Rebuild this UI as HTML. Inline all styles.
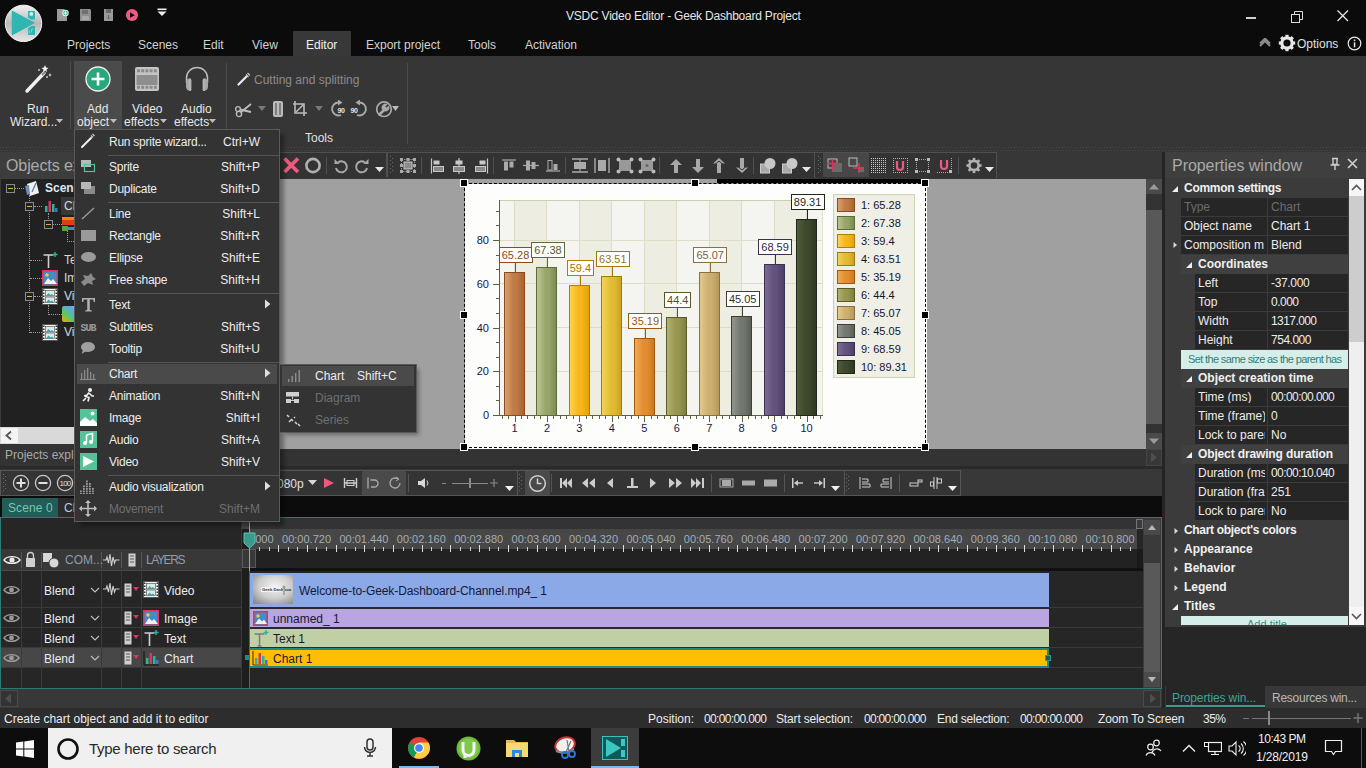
<!DOCTYPE html>
<html><head><meta charset="utf-8"><style>
html,body{margin:0;padding:0;width:1366px;height:768px;overflow:hidden;background:#0b0b0b;}
body{position:relative;font-family:"Liberation Sans",sans-serif;}
div{position:absolute;}
.t{white-space:nowrap;}
</style></head><body>
<div style="left:0px;top:0px;width:1366px;height:56px;background:#0b0b0b;"></div>
<svg style="position:absolute;left:4px;top:4px;" width="40" height="40" viewBox="0 0 40 40"><defs><linearGradient id="lg" x1="0" y1="0" x2="0" y2="1"><stop offset="0" stop-color="#f2f2f2"/><stop offset="0.5" stop-color="#b9b9b9"/><stop offset="1" stop-color="#e6e6e6"/></linearGradient></defs>
<circle cx="19.5" cy="19.35" r="18.2" fill="url(#lg)" stroke="#f6f6f6" stroke-width="1"/>
<path d="M8.5 7.6 L29.6 18.9 L8.5 30.3 Z" fill="#2fb6b2" stroke="#2fb6b2" stroke-width="1.6" stroke-linejoin="round"/>
<path d="M24.1 6.9H31V15.5H27.15L24.1 13.8Z" fill="#2fb6b2"/><path d="M24.1 24L27.7 22H31V31H24.1Z" fill="#2fb6b2"/>
<circle cx="27.3" cy="9.9" r="1.9" fill="#d8f2f2"/><path d="M25.5 29v-2.5M27.5 28.5v-3l2-0.6" stroke="#8ad8d4" stroke-width="0.8" fill="none"/></svg>
<svg style="position:absolute;left:56px;top:8px;" width="14" height="14" viewBox="0 0 14 14"><path d="M1 1h7l3 3v9H1z" fill="#9a9a9a"/><circle cx="9.5" cy="5" r="3.2" fill="#fff"/><circle cx="9.5" cy="5" r="2.4" fill="#3cb89a"/><path d="M9.5 3.3v3.4M7.8 5h3.4" stroke="#fff" stroke-width="0.9"/></svg>
<svg style="position:absolute;left:79px;top:8px;" width="13" height="14" viewBox="0 0 13 14"><path d="M1 1h10l1 1v11H1z" fill="#8f8f8f"/><rect x="3" y="2" width="6" height="4" fill="#6f6f6f"/><rect x="3" y="8" width="7" height="4" fill="#a8a8a8"/></svg>
<svg style="position:absolute;left:103px;top:8px;" width="11" height="14" viewBox="0 0 11 14"><path d="M1 1h9v12H1z" fill="#9a9a9a"/><rect x="3" y="1" width="5" height="4" fill="#6a6a6a"/><path d="M5.5 7v4M4 9.5l1.5 1.5 1.5-1.5" stroke="#666" fill="none"/></svg>
<svg style="position:absolute;left:125px;top:8px;" width="14" height="14" viewBox="0 0 14 14"><circle cx="7" cy="7" r="6.1" fill="#ec5b80"/><path d="M5 4.2L9.8 7.2 5 9.8z" fill="#0b0b0b"/></svg>
<svg style="position:absolute;left:157px;top:8px;" width="10" height="9" viewBox="0 0 10 9"><rect x="0.5" y="0.5" width="9" height="1.6" fill="#eee"/><path d="M0.5 3.5h9L5 8z" fill="#eee"/></svg>
<div class="t" style="left:566px;top:10px;font-size:12px;line-height:12px;color:#e6e6e6;font-weight:400;letter-spacing:-0.22px">VSDC Video Editor - Geek Dashboard Project</div>
<div style="left:1246px;top:17px;width:10px;height:2px;background:#d0d0d0;"></div>
<svg style="position:absolute;left:1290px;top:10px;" width="14" height="14" viewBox="0 0 14 14"><rect x="1.5" y="4.5" width="8" height="8" fill="none" stroke="#ddd"/><path d="M4.5 4.5V1.5h8v8h-3" fill="none" stroke="#ddd"/></svg>
<svg style="position:absolute;left:1336px;top:9px;" width="14" height="14" viewBox="0 0 14 14"><path d="M1.5 1.5L12 12M12 1.5L1.5 12" stroke="#e4e4e4" stroke-width="1.3"/></svg>
<div class="t" style="left:67px;top:39px;font-size:12px;line-height:12px;color:#d2d2d2;font-weight:400;">Projects</div>
<div class="t" style="left:138px;top:39px;font-size:12px;line-height:12px;color:#d2d2d2;font-weight:400;">Scenes</div>
<div class="t" style="left:203px;top:39px;font-size:12px;line-height:12px;color:#d2d2d2;font-weight:400;">Edit</div>
<div class="t" style="left:252px;top:39px;font-size:12px;line-height:12px;color:#d2d2d2;font-weight:400;">View</div>
<div class="t" style="left:366px;top:39px;font-size:12px;line-height:12px;color:#d2d2d2;font-weight:400;">Export project</div>
<div class="t" style="left:468px;top:39px;font-size:12px;line-height:12px;color:#d2d2d2;font-weight:400;">Tools</div>
<div class="t" style="left:525px;top:39px;font-size:12px;line-height:12px;color:#d2d2d2;font-weight:400;">Activation</div>
<div style="left:293px;top:31px;width:58px;height:25px;background:#383838;"></div>
<div class="t" style="left:306px;top:39px;font-size:12px;line-height:12px;color:#f2f2f2;font-weight:400;">Editor</div>
<svg style="position:absolute;left:1259px;top:38px;" width="12" height="10" viewBox="0 0 12 10"><path d="M1 8L6 3l5 5M1 5.5L6 0.5l5 5" stroke="#8a8a8a" stroke-width="2" fill="none"/></svg>
<svg style="position:absolute;left:1278px;top:34px;" width="18" height="18" viewBox="0 0 18 18"><g transform="translate(9 9)"><circle r="5.2" fill="none" stroke="#e8e8e8" stroke-width="3.2"/><rect x="-1.6" y="-8.2" width="3.2" height="4" fill="#e8e8e8" transform="rotate(0)"/><rect x="-1.6" y="-8.2" width="3.2" height="4" fill="#e8e8e8" transform="rotate(45)"/><rect x="-1.6" y="-8.2" width="3.2" height="4" fill="#e8e8e8" transform="rotate(90)"/><rect x="-1.6" y="-8.2" width="3.2" height="4" fill="#e8e8e8" transform="rotate(135)"/><rect x="-1.6" y="-8.2" width="3.2" height="4" fill="#e8e8e8" transform="rotate(180)"/><rect x="-1.6" y="-8.2" width="3.2" height="4" fill="#e8e8e8" transform="rotate(225)"/><rect x="-1.6" y="-8.2" width="3.2" height="4" fill="#e8e8e8" transform="rotate(270)"/><rect x="-1.6" y="-8.2" width="3.2" height="4" fill="#e8e8e8" transform="rotate(315)"/><circle r="2" fill="#0b0b0b"/></g></svg>
<div class="t" style="left:1297px;top:38px;font-size:12px;line-height:12px;color:#e0e0e0;font-weight:400;">Options</div>
<svg style="position:absolute;left:1347px;top:36px;" width="15" height="15" viewBox="0 0 15 15"><circle cx="7.5" cy="7.5" r="6.3" fill="none" stroke="#e8e8e8" stroke-width="1.2"/><rect x="6.8" y="6.3" width="1.5" height="5" fill="#e8e8e8"/><rect x="6.8" y="3.5" width="1.5" height="1.6" fill="#e8e8e8"/></svg>
<div style="left:0px;top:56px;width:1366px;height:96px;background:#363636;"></div>
<svg style="position:absolute;left:24px;top:64px;" width="28" height="30" viewBox="0 0 28 30"><path d="M3 27L20 9" stroke="#f0f0f0" stroke-width="3.4" stroke-linecap="round"/><path d="M18 11l3-3" stroke="#888" stroke-width="2"/><path d="M21 1l1 2.5 2.5 0.5-2 1.5 0.5 2.5-2-1.4-2 1.4 0.5-2.5-2-1.5 2.5-.5z" fill="#f4f4f4"/><path d="M26 9l.6 1.4 1.4.6-1.4.6-.6 1.4-.6-1.4-1.4-.6 1.4-.6z" fill="#ddd"/><circle cx="15" cy="6" r="0.9" fill="#ddd"/><circle cx="23" cy="13" r="0.9" fill="#ddd"/></svg>
<div class="t" style="left:27px;top:103px;font-size:12px;line-height:12px;color:#e8e8e8;font-weight:400;">Run</div>
<div class="t" style="left:10px;top:116px;font-size:12px;line-height:12px;color:#e8e8e8;font-weight:400;">Wizard...</div>
<svg style="position:absolute;left:56px;top:119px;" width="7" height="4" viewBox="0 0 7 4"><path d="M0 0h7L3.5 4z" fill="#bdbdbd"/></svg>
<div style="left:70px;top:61px;width:1px;height:68px;background:#4c4c4c;"></div>
<div style="left:74px;top:61px;width:48px;height:68px;background:#4b4b4b;"></div>
<svg style="position:absolute;left:85px;top:66px;" width="26" height="26" viewBox="0 0 26 26"><circle cx="13" cy="13" r="12" fill="#27a77a" stroke="#f2f2f2" stroke-width="1.3"/><path d="M13 6.5v13M6.5 13h13" stroke="#fff" stroke-width="2.6"/></svg>
<div class="t" style="left:87px;top:103px;font-size:12px;line-height:12px;color:#e8e8e8;font-weight:400;">Add</div>
<div class="t" style="left:77px;top:116px;font-size:12px;line-height:12px;color:#e8e8e8;font-weight:400;">object</div>
<svg style="position:absolute;left:110px;top:119px;" width="7" height="4" viewBox="0 0 7 4"><path d="M0 0h7L3.5 4z" fill="#bdbdbd"/></svg>
<svg style="position:absolute;left:134px;top:66px;" width="26" height="26" viewBox="0 0 26 26"><rect x="1" y="1" width="24" height="24" rx="2" fill="#c4c4c4"/><rect x="2.5" y="9" width="21" height="10" fill="#8e8e8e"/><rect x="3.0" y="3.3" width="3" height="3" fill="#8a8a8a"/><rect x="3.0" y="19.8" width="3" height="3" fill="#8a8a8a"/><rect x="7.2" y="3.3" width="3" height="3" fill="#8a8a8a"/><rect x="7.2" y="19.8" width="3" height="3" fill="#8a8a8a"/><rect x="11.4" y="3.3" width="3" height="3" fill="#8a8a8a"/><rect x="11.4" y="19.8" width="3" height="3" fill="#8a8a8a"/><rect x="15.600000000000001" y="3.3" width="3" height="3" fill="#8a8a8a"/><rect x="15.600000000000001" y="19.8" width="3" height="3" fill="#8a8a8a"/><rect x="19.8" y="3.3" width="3" height="3" fill="#8a8a8a"/><rect x="19.8" y="19.8" width="3" height="3" fill="#8a8a8a"/></svg>
<div class="t" style="left:132px;top:103px;font-size:12px;line-height:12px;color:#e8e8e8;font-weight:400;">Video</div>
<div class="t" style="left:124px;top:116px;font-size:12px;line-height:12px;color:#e8e8e8;font-weight:400;">effects</div>
<svg style="position:absolute;left:160px;top:119px;" width="7" height="4" viewBox="0 0 7 4"><path d="M0 0h7L3.5 4z" fill="#bdbdbd"/></svg>
<svg style="position:absolute;left:183px;top:65px;" width="28" height="28" viewBox="0 0 28 28"><path d="M3.5 18V13a10.5 10.5 0 0 1 21 0v5" fill="none" stroke="#bdbdbd" stroke-width="1.5"/><path d="M3 17.5q0-4 4.5-4.5v13q-4.5-0.5-4.5-4.5z" fill="#a8a8a8"/><path d="M25 17.5q0-4-4.5-4.5v13q4.5-0.5 4.5-4.5z" fill="#a8a8a8"/><rect x="6" y="14" width="2.4" height="12" rx="1" fill="#b4b4b4"/><rect x="19.6" y="14" width="2.4" height="12" rx="1" fill="#b4b4b4"/></svg>
<div class="t" style="left:181px;top:103px;font-size:12px;line-height:12px;color:#e8e8e8;font-weight:400;">Audio</div>
<div class="t" style="left:174px;top:116px;font-size:12px;line-height:12px;color:#e8e8e8;font-weight:400;">effects</div>
<svg style="position:absolute;left:209px;top:119px;" width="7" height="4" viewBox="0 0 7 4"><path d="M0 0h7L3.5 4z" fill="#bdbdbd"/></svg>
<div style="left:226px;top:63px;width:1px;height:66px;background:#4c4c4c;"></div>
<svg style="position:absolute;left:237px;top:72px;" width="14" height="14" viewBox="0 0 14 14"><path d="M1.5 12.5L9.5 4.5" stroke="#eee" stroke-width="2.2" stroke-linecap="round"/><path d="M9 2.5l2.5 2.5M10.5 1l2.5 2.5" stroke="#ccc" stroke-width="1.2"/></svg>
<div class="t" style="left:254px;top:74px;font-size:12px;line-height:12px;color:#8c8c8c;font-weight:400;">Cutting and splitting</div>
<svg style="position:absolute;left:235px;top:100px;" width="18" height="18" viewBox="0 0 18 18"><circle cx="4" cy="14" r="2.6" fill="none" stroke="#bbb" stroke-width="1.4"/><circle cx="3" cy="9" r="2.4" fill="none" stroke="#bbb" stroke-width="1.4"/><path d="M5.5 12.5L16 4M5 9.5L16 12" stroke="#bbb" stroke-width="1.8"/></svg>
<svg style="position:absolute;left:258px;top:106px;" width="8" height="5" viewBox="0 0 8 5"><path d="M0 0h8L4 5z" fill="#777"/></svg>
<svg style="position:absolute;left:272px;top:100px;" width="12" height="18" viewBox="0 0 12 18"><rect x="1" y="1" width="10" height="16" rx="2" fill="#bbb"/><path d="M4 3v12M8 3v12" stroke="#555" stroke-width="1.2"/></svg>
<svg style="position:absolute;left:292px;top:100px;" width="16" height="18" viewBox="0 0 16 18"><path d="M3 1v12h12M1 4h11v12" fill="none" stroke="#bbb" stroke-width="1.6"/><path d="M4 12L12 4" stroke="#bbb" stroke-width="1.4"/></svg>
<svg style="position:absolute;left:315px;top:106px;" width="8" height="5" viewBox="0 0 8 5"><path d="M0 0h8L4 5z" fill="#777"/></svg>
<svg style="position:absolute;left:329px;top:100px;" width="20" height="18" viewBox="0 0 20 18"><path d="M10 2.5A6.5 6.5 0 1 0 12 15" fill="none" stroke="#aaa" stroke-width="1.8"/><path d="M9 -0.5l4.5 3-4.5 3z" fill="#aaa"/><text x="8.5" y="12.5" font-size="7" font-family="Liberation Sans" font-weight="bold" fill="#e6e6e6" letter-spacing="-0.3">90</text></svg>
<svg style="position:absolute;left:349px;top:100px;" width="20" height="18" viewBox="0 0 20 18"><path d="M10 2.5A6.5 6.5 0 1 1 8 15" fill="none" stroke="#aaa" stroke-width="1.8"/><path d="M11 -0.5l-4.5 3 4.5 3z" fill="#aaa"/><text x="1.5" y="12.5" font-size="7" font-family="Liberation Sans" font-weight="bold" fill="#e6e6e6" letter-spacing="-0.3">90</text></svg>
<svg style="position:absolute;left:375px;top:100px;" width="18" height="18" viewBox="0 0 18 18"><circle cx="9" cy="9.2" r="7.3" fill="none" stroke="#aaa" stroke-width="1.7"/><path d="M4.5 14.5L9.5 9.5" stroke="#aaa" stroke-width="2.6" stroke-linecap="round"/><path d="M8.2 10.2a3.6 3.6 0 0 1 4.3-5.8l-2.2 2.2 1.2 1.2 2.2-2.2a3.6 3.6 0 0 1-5.5 4.6z" fill="#aaa"/></svg>
<svg style="position:absolute;left:392px;top:106px;" width="7" height="5" viewBox="0 0 7 5"><path d="M0 0h7L3.5 5z" fill="#bbb"/></svg>
<div class="t" style="left:305px;top:132px;font-size:12px;line-height:12px;color:#e0e0e0;font-weight:400;">Tools</div>
<div style="left:407px;top:63px;width:1px;height:81px;background:#4c4c4c;"></div>
<div style="left:0px;top:147px;width:1366px;height:1px;background:transparent;background:repeating-linear-gradient(90deg,#4a4a4a 0 1px,transparent 1px 3px)"></div>
<div style="left:1px;top:150px;width:1366px;height:1px;background:transparent;background:repeating-linear-gradient(90deg,#4a4a4a 0 1px,transparent 1px 3px)"></div>
<div style="left:0px;top:152px;width:1162px;height:27px;background:#373737;"></div>
<div style="left:0px;top:152px;width:279px;height:27px;background:#3d3d3d;"></div>
<div class="t" style="left:6px;top:158px;font-size:16px;line-height:16px;color:#a9a9a9;font-weight:400;letter-spacing:-0.1px">Objects explorer</div>
<div style="left:0px;top:179px;width:279px;height:248px;background:#212121;"></div>
<div style="left:0px;top:179px;width:1px;height:248px;background:#3a3a3a;"></div>
<div style="left:15px;top:188px;width:9px;height:1px;background:transparent;border-top:1px dotted #9a9a9a;box-sizing:border-box;"></div>
<div style="left:6px;top:184px;width:9px;height:9px;background:#212121;box-sizing:border-box;border:1px solid #8a8a8a;"></div>
<div style="left:8px;top:188px;width:5px;height:1px;background:#d8b24c;"></div>
<div style="left:29px;top:195px;width:1px;height:138px;background:transparent;border-left:1px dotted #9a9a9a;box-sizing:border-box;"></div>
<svg style="position:absolute;left:24px;top:180px;" width="16" height="16" viewBox="0 0 16 16"><path d="M3 4l9-3 3 12-9 3z" fill="#f0f0f0"/><path d="M1 6l4-1 1 9-3 1z" fill="#6d8fb8"/><path d="M8 12l4-9" stroke="#4a79b0" stroke-width="1.2"/></svg>
<div class="t" style="left:45px;top:182px;font-size:12px;line-height:12px;color:#dce6f0;font-weight:700;">Scene 0</div>
<div style="left:34px;top:206px;width:8px;height:1px;background:transparent;border-top:1px dotted #9a9a9a;box-sizing:border-box;"></div>
<div style="left:25px;top:202px;width:9px;height:9px;background:#212121;box-sizing:border-box;border:1px solid #8a8a8a;"></div>
<div style="left:27px;top:206px;width:5px;height:1px;background:#d8b24c;"></div>
<div style="left:61px;top:197px;width:100px;height:18px;background:#383838;"></div>
<svg style="position:absolute;left:42px;top:198px;" width="16" height="16" viewBox="0 0 16 16"><path d="M1 1v14h15" stroke="#222" fill="none"/><rect x="3" y="8" width="2.5" height="6" fill="#2bb59a"/><rect x="6.5" y="3" width="2.5" height="11" fill="#e0325a"/><rect x="10" y="6" width="2.5" height="8" fill="#2bb59a"/><rect x="13" y="10" width="2.5" height="4" fill="#3a7ac8"/></svg>
<div class="t" style="left:64px;top:200px;font-size:12px;line-height:12px;color:#d8d8d8;font-weight:400;">Chart 1</div>
<div style="left:48px;top:213px;width:1px;height:8px;background:transparent;border-left:1px dotted #9a9a9a;box-sizing:border-box;"></div>
<div style="left:53px;top:224px;width:9px;height:1px;background:transparent;border-top:1px dotted #9a9a9a;box-sizing:border-box;"></div>
<div style="left:44px;top:220px;width:9px;height:9px;background:#212121;box-sizing:border-box;border:1px solid #8a8a8a;"></div>
<div style="left:46px;top:224px;width:5px;height:1px;background:#d8b24c;"></div>
<svg style="position:absolute;left:62px;top:216px;" width="16" height="16" viewBox="0 0 16 16"><rect x="0" y="1" width="16" height="8" fill="#e03c1c"/><rect x="0" y="1" width="16" height="3" fill="#f08020"/><rect x="0" y="10" width="6" height="5" fill="#5aa040"/><rect x="6" y="11" width="10" height="3" fill="#3a8ad0"/></svg>
<div style="left:67px;top:231px;width:1px;height:11px;background:transparent;border-left:1px dotted #9a9a9a;box-sizing:border-box;"></div>
<div style="left:67px;top:241px;width:13px;height:1px;background:transparent;border-top:1px dotted #9a9a9a;box-sizing:border-box;"></div>
<div style="left:30px;top:260px;width:12px;height:1px;background:transparent;border-top:1px dotted #9a9a9a;box-sizing:border-box;"></div>
<svg style="position:absolute;left:42px;top:251px;" width="16" height="18" viewBox="0 0 16 18"><path d="M1.5 4h10M6.5 4v13" stroke="#cfcfcf" stroke-width="1.6"/><path d="M13 1v5M10.5 3.5h5" stroke="#2bb59a" stroke-width="1.4"/></svg>
<div class="t" style="left:64px;top:254px;font-size:12px;line-height:12px;color:#d8d8d8;font-weight:400;">Text</div>
<div style="left:30px;top:278px;width:12px;height:1px;background:transparent;border-top:1px dotted #9a9a9a;box-sizing:border-box;"></div>
<svg style="position:absolute;left:42px;top:270px;" width="16" height="16" viewBox="0 0 16 16"><rect x="0.75" y="0.75" width="14.5" height="14.5" fill="#3f8ec9" stroke="#e0325a" stroke-width="1.5"/><path d="M2 14l4-6 3 3 2-2 4 5z" fill="#f0f0f0"/><circle cx="5" cy="5" r="1.8" fill="#f6c542"/></svg>
<div class="t" style="left:64px;top:272px;font-size:12px;line-height:12px;color:#d8d8d8;font-weight:400;">Image</div>
<div style="left:34px;top:296px;width:8px;height:1px;background:transparent;border-top:1px dotted #9a9a9a;box-sizing:border-box;"></div>
<div style="left:25px;top:292px;width:9px;height:9px;background:#212121;box-sizing:border-box;border:1px solid #8a8a8a;"></div>
<div style="left:27px;top:296px;width:5px;height:1px;background:#d8b24c;"></div>
<svg style="position:absolute;left:42px;top:288px;" width="16" height="17" viewBox="0 0 16 17"><rect x="0.5" y="0.5" width="15" height="16" fill="#f4f4f4" stroke="#555"/><rect x="3.5" y="2.5" width="9" height="5.5" fill="#dfe8e8" stroke="#444" stroke-width="0.6"/><rect x="3.5" y="9" width="9" height="5.5" fill="#dfe8e8" stroke="#444" stroke-width="0.6"/><path d="M4 8l2.5-3 2 2 1.5-1 2 2M4 14.5l2.5-3 2 2 1.5-1 2 2" fill="#3aa8a0"/><rect x="1" y="1.5" width="1.5" height="1.5" fill="#333"/><rect x="13.5" y="1.5" width="1.5" height="1.5" fill="#333"/><rect x="1" y="4.5" width="1.5" height="1.5" fill="#333"/><rect x="13.5" y="4.5" width="1.5" height="1.5" fill="#333"/><rect x="1" y="7.5" width="1.5" height="1.5" fill="#333"/><rect x="13.5" y="7.5" width="1.5" height="1.5" fill="#333"/><rect x="1" y="10.5" width="1.5" height="1.5" fill="#333"/><rect x="13.5" y="10.5" width="1.5" height="1.5" fill="#333"/><rect x="1" y="13.5" width="1.5" height="1.5" fill="#333"/><rect x="13.5" y="13.5" width="1.5" height="1.5" fill="#333"/></svg>
<div class="t" style="left:64px;top:290px;font-size:12px;line-height:12px;color:#d8d8d8;font-weight:400;">Video</div>
<div style="left:48px;top:305px;width:1px;height:10px;background:transparent;border-left:1px dotted #9a9a9a;box-sizing:border-box;"></div>
<div style="left:48px;top:314px;width:14px;height:1px;background:transparent;border-top:1px dotted #9a9a9a;box-sizing:border-box;"></div>
<svg style="position:absolute;left:62px;top:306px;" width="16" height="16" viewBox="0 0 16 16"><defs><linearGradient id="rb" x1="0" y1="1" x2="1" y2="0"><stop offset="0" stop-color="#f5a400"/><stop offset="0.35" stop-color="#5ec85a"/><stop offset="0.7" stop-color="#58a8f0"/><stop offset="1" stop-color="#c0a0f0"/></linearGradient></defs><rect x="0" y="0" width="16" height="16" rx="2" fill="url(#rb)"/></svg>
<div style="left:30px;top:332px;width:12px;height:1px;background:transparent;border-top:1px dotted #9a9a9a;box-sizing:border-box;"></div>
<svg style="position:absolute;left:42px;top:324px;" width="16" height="17" viewBox="0 0 16 17"><rect x="0.5" y="0.5" width="15" height="16" fill="#f4f4f4" stroke="#555"/><rect x="3.5" y="2.5" width="9" height="5.5" fill="#dfe8e8" stroke="#444" stroke-width="0.6"/><rect x="3.5" y="9" width="9" height="5.5" fill="#dfe8e8" stroke="#444" stroke-width="0.6"/><path d="M4 8l2.5-3 2 2 1.5-1 2 2M4 14.5l2.5-3 2 2 1.5-1 2 2" fill="#3aa8a0"/><rect x="1" y="1.5" width="1.5" height="1.5" fill="#333"/><rect x="13.5" y="1.5" width="1.5" height="1.5" fill="#333"/><rect x="1" y="4.5" width="1.5" height="1.5" fill="#333"/><rect x="13.5" y="4.5" width="1.5" height="1.5" fill="#333"/><rect x="1" y="7.5" width="1.5" height="1.5" fill="#333"/><rect x="13.5" y="7.5" width="1.5" height="1.5" fill="#333"/><rect x="1" y="10.5" width="1.5" height="1.5" fill="#333"/><rect x="13.5" y="10.5" width="1.5" height="1.5" fill="#333"/><rect x="1" y="13.5" width="1.5" height="1.5" fill="#333"/><rect x="13.5" y="13.5" width="1.5" height="1.5" fill="#333"/></svg>
<div class="t" style="left:64px;top:326px;font-size:12px;line-height:12px;color:#d8d8d8;font-weight:400;">Video</div>
<div style="left:0px;top:427px;width:279px;height:17px;background:#d9d9d9;"></div>
<div style="left:1px;top:428px;width:17px;height:15px;background:#f4f4f4;"></div>
<svg style="position:absolute;left:4px;top:430px;" width="10" height="11" viewBox="0 0 10 11"><path d="M7 1.5L2.5 5.5 7 9.5" stroke="#555" stroke-width="1.8" fill="none"/></svg>
<div style="left:0px;top:444px;width:279px;height:22px;background:#333333;"></div>
<div class="t" style="left:5px;top:449px;font-size:12px;line-height:12px;color:#a9a9a9;font-weight:400;">Projects explorer</div>
<div style="left:279px;top:179px;width:883px;height:270px;background:#a0a0a0;"></div>
<div style="left:1146px;top:179px;width:16px;height:270px;background:#333333;"></div>
<div style="left:1146px;top:179px;width:16px;height:15px;background:#4a4a4a;"></div>
<svg style="position:absolute;left:1148px;top:183px;" width="12" height="7" viewBox="0 0 12 7"><path d="M1 6.5L6 1l5 5.5z" fill="#9a9a9a"/></svg>
<div style="left:1146px;top:210px;width:16px;height:214px;background:#585858;"></div>
<div style="left:1146px;top:433px;width:16px;height:16px;background:#4a4a4a;"></div>
<svg style="position:absolute;left:1148px;top:438px;" width="12" height="7" viewBox="0 0 12 7"><path d="M1 0.5h10L6 6z" fill="#9a9a9a"/></svg>
<div style="left:279px;top:449px;width:883px;height:17px;background:#333333;"></div>
<div style="left:1146px;top:449px;width:16px;height:17px;background:#383838;box-sizing:border-box;border:1px solid #444;"></div>
<svg style="position:absolute;left:1150px;top:452px;" width="8" height="11" viewBox="0 0 8 11"><path d="M1 0.5L7 5.5 1 10.5z" fill="#4e4e4e"/></svg>
<div style="left:0px;top:466px;width:1162px;height:3px;background:#2a2a2a;"></div>
<div style="left:1162px;top:152px;width:3px;height:558px;background:#242424;"></div>
<div style="left:276px;top:152px;width:721px;height:26px;background:#333333;box-sizing:border-box;border:1px solid #505050;border-left:none;border-bottom:none;"></div>
<div style="left:823px;top:153px;width:46px;height:24px;background:#474747;"></div>
<svg style="position:absolute;left:282px;top:156px;" width="18" height="18" viewBox="0 0 18 18"><path d="M2.5 2.5L16 16M16 2.5L2.5 16" stroke="#ec5b7d" stroke-width="3.8"/></svg>
<svg style="position:absolute;left:304px;top:157px;" width="18" height="17" viewBox="0 0 18 17"><circle cx="9" cy="8.5" r="6.6" fill="none" stroke="#b0b0b0" stroke-width="2.6"/></svg>
<div style="left:326px;top:157px;width:1px;height:17px;background:#505050;"></div>
<svg style="position:absolute;left:332px;top:157px;" width="17" height="17" viewBox="0 0 17 17"><path d="M6 5.5A5.5 5.5 0 1 1 4 11" fill="none" stroke="#a8a8a8" stroke-width="2"/><path d="M2.5 2v5h5z" fill="#a8a8a8"/></svg>
<svg style="position:absolute;left:354px;top:157px;" width="17" height="17" viewBox="0 0 17 17"><path d="M11 5.5A5.5 5.5 0 1 0 13 11" fill="none" stroke="#a8a8a8" stroke-width="2"/><path d="M14.5 2v5h-5z" fill="#a8a8a8"/></svg>
<svg style="position:absolute;left:375px;top:167px;" width="9" height="6" viewBox="0 0 9 6"><path d="M0 0h9L4.5 5z" fill="#e8e8e8"/></svg>
<div style="left:386px;top:153px;width:2px;height:24px;background:#505050;"></div>
<svg style="position:absolute;left:390px;top:156px;" width="4" height="19" viewBox="0 0 4 19"><rect x="0" y="0" width="1" height="1" fill="#6a6a6a"/><rect x="2" y="2" width="1" height="1" fill="#6a6a6a"/><rect x="0" y="4" width="1" height="1" fill="#6a6a6a"/><rect x="2" y="6" width="1" height="1" fill="#6a6a6a"/><rect x="0" y="8" width="1" height="1" fill="#6a6a6a"/><rect x="2" y="10" width="1" height="1" fill="#6a6a6a"/><rect x="0" y="12" width="1" height="1" fill="#6a6a6a"/><rect x="2" y="14" width="1" height="1" fill="#6a6a6a"/><rect x="0" y="16" width="1" height="1" fill="#6a6a6a"/></svg>
<svg style="position:absolute;left:399px;top:157px;" width="18" height="17" viewBox="0 0 18 17"><rect x="2.5" y="2.5" width="13" height="12" fill="none" stroke="#999" stroke-dasharray="1.5 1"/><rect x="5" y="5" width="8" height="7" fill="#8a8a8a" stroke="#c8c8c8"/><rect x="1" y="1" width="3" height="3" fill="#aaa"/><rect x="1" y="13" width="3" height="3" fill="#aaa"/><rect x="7.5" y="1" width="3" height="3" fill="#aaa"/><rect x="7.5" y="13" width="3" height="3" fill="#aaa"/><rect x="14" y="1" width="3" height="3" fill="#aaa"/><rect x="14" y="13" width="3" height="3" fill="#aaa"/><rect x="1" y="7" width="3" height="3" fill="#aaa"/><rect x="14" y="7" width="3" height="3" fill="#aaa"/></svg>
<div style="left:421px;top:157px;width:1px;height:17px;background:#505050;"></div>
<svg style="position:absolute;left:429px;top:157px;" width="18" height="17" viewBox="0 0 18 17"><path d="M2.5 1.5v15" stroke="#c8c8c8" stroke-width="1.2"/><rect x="4.5" y="3.5" width="6" height="4" fill="#c8c8c8"/><rect x="4.5" y="9.5" width="10" height="5" fill="#888" stroke="#c8c8c8"/></svg>
<svg style="position:absolute;left:450px;top:157px;" width="18" height="17" viewBox="0 0 18 17"><path d="M9 1v16" stroke="#c8c8c8" stroke-width="1.2"/><rect x="5.5" y="3.5" width="7" height="4" fill="#c8c8c8"/><rect x="3.5" y="9.5" width="11" height="5" fill="#888" stroke="#c8c8c8"/></svg>
<svg style="position:absolute;left:472px;top:157px;" width="18" height="17" viewBox="0 0 18 17"><path d="M15.5 1.5v15" stroke="#c8c8c8" stroke-width="1.2"/><rect x="7.5" y="3.5" width="6" height="4" fill="#c8c8c8"/><rect x="3.5" y="9.5" width="10" height="5" fill="#888" stroke="#c8c8c8"/></svg>
<div style="left:493px;top:157px;width:1px;height:17px;background:#505050;"></div>
<svg style="position:absolute;left:500px;top:157px;" width="18" height="17" viewBox="0 0 18 17"><path d="M2 3h14" stroke="#aaa" stroke-width="1.2"/><rect x="4" y="4.5" width="4" height="9" fill="#aaa"/><rect x="9.5" y="4.5" width="4" height="6" fill="#aaa"/></svg>
<svg style="position:absolute;left:522px;top:157px;" width="18" height="17" viewBox="0 0 18 17"><path d="M1 8.5h16" stroke="#aaa" stroke-width="1.2"/><rect x="4" y="3.5" width="4" height="10" fill="#aaa"/><rect x="9.5" y="5" width="4" height="7" fill="#aaa"/></svg>
<svg style="position:absolute;left:544px;top:157px;" width="18" height="17" viewBox="0 0 18 17"><path d="M2 14h14" stroke="#aaa" stroke-width="1.2"/><rect x="4" y="3.5" width="4" height="9.5" fill="none" stroke="#aaa"/><rect x="9.5" y="7" width="4" height="6" fill="#aaa"/></svg>
<div style="left:565px;top:157px;width:1px;height:17px;background:#505050;"></div>
<svg style="position:absolute;left:571px;top:157px;" width="18" height="17" viewBox="0 0 18 17"><path d="M1 2h16M1 15h16" stroke="#aaa" stroke-width="1.4"/><rect x="3" y="5" width="12" height="7" fill="#aaa"/><path d="M9 2v3M9 12v3" stroke="#aaa"/></svg>
<svg style="position:absolute;left:593px;top:157px;" width="18" height="17" viewBox="0 0 18 17"><path d="M2 1v15M16 1v15" stroke="#aaa" stroke-width="1.4"/><rect x="5" y="3" width="8" height="11" fill="#aaa"/></svg>
<svg style="position:absolute;left:616px;top:157px;" width="18" height="17" viewBox="0 0 18 17"><rect x="3" y="3" width="12" height="11" fill="#999"/><circle cx="2.5" cy="2.5" r="2" fill="#bbb"/><circle cx="2.5" cy="14.5" r="2" fill="#bbb"/><circle cx="15.5" cy="2.5" r="2" fill="#bbb"/><circle cx="15.5" cy="14.5" r="2" fill="#bbb"/></svg>
<svg style="position:absolute;left:638px;top:157px;" width="18" height="17" viewBox="0 0 18 17"><rect x="3" y="3" width="12" height="11" fill="#999"/><circle cx="9" cy="8.5" r="1.5" fill="#666"/><circle cx="2.5" cy="2.5" r="2" fill="#bbb"/><circle cx="2.5" cy="14.5" r="2" fill="#bbb"/><circle cx="15.5" cy="2.5" r="2" fill="#bbb"/><circle cx="15.5" cy="14.5" r="2" fill="#bbb"/></svg>
<div style="left:659px;top:157px;width:1px;height:17px;background:#505050;"></div>
<svg style="position:absolute;left:667px;top:157px;" width="18" height="17" viewBox="0 0 18 17"><path d="M9 2l6 6h-4v8H7V8H3z" fill="#a8a8a8"/></svg>
<svg style="position:absolute;left:689px;top:157px;" width="18" height="17" viewBox="0 0 18 17"><path d="M9 16l6-6h-4V2H7v8H3z" fill="#a8a8a8"/></svg>
<svg style="position:absolute;left:710px;top:157px;" width="18" height="17" viewBox="0 0 18 17"><path d="M9 1l6 5.5h-4v9.5H7V6.5H3z" fill="#a8a8a8"/><path d="M3 9l6-5 6 5" stroke="#333" stroke-width="1" fill="none"/></svg>
<svg style="position:absolute;left:733px;top:157px;" width="18" height="17" viewBox="0 0 18 17"><path d="M9 16l6-5.5h-4V1H7v9.5H3z" fill="#a8a8a8"/><path d="M3 8l6 5 6-5" stroke="#333" stroke-width="1" fill="none"/></svg>
<div style="left:753px;top:157px;width:1px;height:17px;background:#505050;"></div>
<svg style="position:absolute;left:759px;top:157px;" width="18" height="17" viewBox="0 0 18 17"><rect x="1.5" y="7" width="9" height="9" fill="#aaa" stroke="#ccc"/><circle cx="11" cy="6.5" r="5.5" fill="#c8c8c8"/></svg>
<svg style="position:absolute;left:781px;top:157px;" width="18" height="17" viewBox="0 0 18 17"><rect x="1.5" y="7" width="9" height="9" fill="#aaa" stroke="#ccc"/><circle cx="11" cy="6.5" r="5.5" fill="#c8c8c8"/></svg>
<svg style="position:absolute;left:802px;top:167px;" width="9" height="6" viewBox="0 0 9 6"><path d="M0 0h9L4.5 5z" fill="#e8e8e8"/></svg>
<div style="left:814px;top:152px;width:1px;height:26px;background:#505050;"></div>
<svg style="position:absolute;left:818px;top:156px;" width="4" height="19" viewBox="0 0 4 19"><rect x="0" y="0" width="1" height="1" fill="#6a6a6a"/><rect x="2" y="2" width="1" height="1" fill="#6a6a6a"/><rect x="0" y="4" width="1" height="1" fill="#6a6a6a"/><rect x="2" y="6" width="1" height="1" fill="#6a6a6a"/><rect x="0" y="8" width="1" height="1" fill="#6a6a6a"/><rect x="2" y="10" width="1" height="1" fill="#6a6a6a"/><rect x="0" y="12" width="1" height="1" fill="#6a6a6a"/><rect x="2" y="14" width="1" height="1" fill="#6a6a6a"/><rect x="0" y="16" width="1" height="1" fill="#6a6a6a"/></svg>
<svg style="position:absolute;left:826px;top:157px;" width="18" height="17" viewBox="0 0 18 17"><rect x="2" y="2" width="9" height="9" fill="none" stroke="#bbb"/><rect x="6" y="6" width="10" height="9" fill="#6a6a6a"/><path d="M1 6.5h11M6.5 2v12" stroke="#e0325a" stroke-width="1.4"/></svg>
<svg style="position:absolute;left:848px;top:157px;" width="18" height="17" viewBox="0 0 18 17"><rect x="1" y="1" width="8" height="8" fill="none" stroke="#bbb"/><rect x="10" y="10" width="6" height="5" fill="#6a6a6a"/><path d="M5 11h11M11 6v10" stroke="#e0325a" stroke-width="1.4"/></svg>
<svg style="position:absolute;left:870px;top:157px;" width="18" height="17" viewBox="0 0 18 17"><rect x="1" y="1" width="1" height="1" fill="#c8c8c8"/><rect x="1" y="3" width="1" height="1" fill="#c8c8c8"/><rect x="1" y="5" width="1" height="1" fill="#c8c8c8"/><rect x="1" y="7" width="1" height="1" fill="#c8c8c8"/><rect x="1" y="9" width="1" height="1" fill="#c8c8c8"/><rect x="1" y="11" width="1" height="1" fill="#c8c8c8"/><rect x="1" y="13" width="1" height="1" fill="#c8c8c8"/><rect x="1" y="15" width="1" height="1" fill="#c8c8c8"/><rect x="3" y="1" width="1" height="1" fill="#c8c8c8"/><rect x="3" y="3" width="1" height="1" fill="#c8c8c8"/><rect x="3" y="5" width="1" height="1" fill="#c8c8c8"/><rect x="3" y="7" width="1" height="1" fill="#c8c8c8"/><rect x="3" y="9" width="1" height="1" fill="#c8c8c8"/><rect x="3" y="11" width="1" height="1" fill="#c8c8c8"/><rect x="3" y="13" width="1" height="1" fill="#c8c8c8"/><rect x="3" y="15" width="1" height="1" fill="#c8c8c8"/><rect x="5" y="1" width="1" height="1" fill="#c8c8c8"/><rect x="5" y="3" width="1" height="1" fill="#c8c8c8"/><rect x="5" y="5" width="1" height="1" fill="#c8c8c8"/><rect x="5" y="7" width="1" height="1" fill="#c8c8c8"/><rect x="5" y="9" width="1" height="1" fill="#c8c8c8"/><rect x="5" y="11" width="1" height="1" fill="#c8c8c8"/><rect x="5" y="13" width="1" height="1" fill="#c8c8c8"/><rect x="5" y="15" width="1" height="1" fill="#c8c8c8"/><rect x="7" y="1" width="1" height="1" fill="#c8c8c8"/><rect x="7" y="3" width="1" height="1" fill="#c8c8c8"/><rect x="7" y="5" width="1" height="1" fill="#c8c8c8"/><rect x="7" y="7" width="1" height="1" fill="#c8c8c8"/><rect x="7" y="9" width="1" height="1" fill="#c8c8c8"/><rect x="7" y="11" width="1" height="1" fill="#c8c8c8"/><rect x="7" y="13" width="1" height="1" fill="#c8c8c8"/><rect x="7" y="15" width="1" height="1" fill="#c8c8c8"/><rect x="9" y="1" width="1" height="1" fill="#c8c8c8"/><rect x="9" y="3" width="1" height="1" fill="#c8c8c8"/><rect x="9" y="5" width="1" height="1" fill="#c8c8c8"/><rect x="9" y="7" width="1" height="1" fill="#c8c8c8"/><rect x="9" y="9" width="1" height="1" fill="#c8c8c8"/><rect x="9" y="11" width="1" height="1" fill="#c8c8c8"/><rect x="9" y="13" width="1" height="1" fill="#c8c8c8"/><rect x="9" y="15" width="1" height="1" fill="#c8c8c8"/><rect x="11" y="1" width="1" height="1" fill="#c8c8c8"/><rect x="11" y="3" width="1" height="1" fill="#c8c8c8"/><rect x="11" y="5" width="1" height="1" fill="#c8c8c8"/><rect x="11" y="7" width="1" height="1" fill="#c8c8c8"/><rect x="11" y="9" width="1" height="1" fill="#c8c8c8"/><rect x="11" y="11" width="1" height="1" fill="#c8c8c8"/><rect x="11" y="13" width="1" height="1" fill="#c8c8c8"/><rect x="11" y="15" width="1" height="1" fill="#c8c8c8"/><rect x="13" y="1" width="1" height="1" fill="#c8c8c8"/><rect x="13" y="3" width="1" height="1" fill="#c8c8c8"/><rect x="13" y="5" width="1" height="1" fill="#c8c8c8"/><rect x="13" y="7" width="1" height="1" fill="#c8c8c8"/><rect x="13" y="9" width="1" height="1" fill="#c8c8c8"/><rect x="13" y="11" width="1" height="1" fill="#c8c8c8"/><rect x="13" y="13" width="1" height="1" fill="#c8c8c8"/><rect x="13" y="15" width="1" height="1" fill="#c8c8c8"/><rect x="15" y="1" width="1" height="1" fill="#c8c8c8"/><rect x="15" y="3" width="1" height="1" fill="#c8c8c8"/><rect x="15" y="5" width="1" height="1" fill="#c8c8c8"/><rect x="15" y="7" width="1" height="1" fill="#c8c8c8"/><rect x="15" y="9" width="1" height="1" fill="#c8c8c8"/><rect x="15" y="11" width="1" height="1" fill="#c8c8c8"/><rect x="15" y="13" width="1" height="1" fill="#c8c8c8"/><rect x="15" y="15" width="1" height="1" fill="#c8c8c8"/></svg>
<svg style="position:absolute;left:892px;top:157px;" width="18" height="17" viewBox="0 0 18 17"><rect x="1" y="1" width="1" height="1" fill="#aaa"/><rect x="1" y="15" width="1" height="1" fill="#aaa"/><rect x="1" y="1" width="1" height="1" fill="#aaa"/><rect x="15" y="1" width="1" height="1" fill="#aaa"/><rect x="3" y="1" width="1" height="1" fill="#aaa"/><rect x="3" y="15" width="1" height="1" fill="#aaa"/><rect x="1" y="3" width="1" height="1" fill="#aaa"/><rect x="15" y="3" width="1" height="1" fill="#aaa"/><rect x="5" y="1" width="1" height="1" fill="#aaa"/><rect x="5" y="15" width="1" height="1" fill="#aaa"/><rect x="1" y="5" width="1" height="1" fill="#aaa"/><rect x="15" y="5" width="1" height="1" fill="#aaa"/><rect x="7" y="1" width="1" height="1" fill="#aaa"/><rect x="7" y="15" width="1" height="1" fill="#aaa"/><rect x="1" y="7" width="1" height="1" fill="#aaa"/><rect x="15" y="7" width="1" height="1" fill="#aaa"/><rect x="9" y="1" width="1" height="1" fill="#aaa"/><rect x="9" y="15" width="1" height="1" fill="#aaa"/><rect x="1" y="9" width="1" height="1" fill="#aaa"/><rect x="15" y="9" width="1" height="1" fill="#aaa"/><rect x="11" y="1" width="1" height="1" fill="#aaa"/><rect x="11" y="15" width="1" height="1" fill="#aaa"/><rect x="1" y="11" width="1" height="1" fill="#aaa"/><rect x="15" y="11" width="1" height="1" fill="#aaa"/><rect x="13" y="1" width="1" height="1" fill="#aaa"/><rect x="13" y="15" width="1" height="1" fill="#aaa"/><rect x="1" y="13" width="1" height="1" fill="#aaa"/><rect x="15" y="13" width="1" height="1" fill="#aaa"/><rect x="15" y="1" width="1" height="1" fill="#aaa"/><rect x="15" y="15" width="1" height="1" fill="#aaa"/><rect x="1" y="15" width="1" height="1" fill="#aaa"/><rect x="15" y="15" width="1" height="1" fill="#aaa"/><path d="M5 4v6a3 3 0 0 0 6 0V4" stroke="#ec5b7d" stroke-width="2.2" fill="none"/></svg>
<svg style="position:absolute;left:914px;top:157px;" width="18" height="17" viewBox="0 0 18 17"><rect x="1" y="2" width="1" height="1" fill="#aaa"/><rect x="1" y="14" width="1" height="1" fill="#aaa"/><rect x="2" y="1" width="1" height="1" fill="#aaa"/><rect x="14" y="1" width="1" height="1" fill="#aaa"/><rect x="3" y="2" width="1" height="1" fill="#aaa"/><rect x="3" y="14" width="1" height="1" fill="#aaa"/><rect x="2" y="3" width="1" height="1" fill="#aaa"/><rect x="14" y="3" width="1" height="1" fill="#aaa"/><rect x="5" y="2" width="1" height="1" fill="#aaa"/><rect x="5" y="14" width="1" height="1" fill="#aaa"/><rect x="2" y="5" width="1" height="1" fill="#aaa"/><rect x="14" y="5" width="1" height="1" fill="#aaa"/><rect x="7" y="2" width="1" height="1" fill="#aaa"/><rect x="7" y="14" width="1" height="1" fill="#aaa"/><rect x="2" y="7" width="1" height="1" fill="#aaa"/><rect x="14" y="7" width="1" height="1" fill="#aaa"/><rect x="9" y="2" width="1" height="1" fill="#aaa"/><rect x="9" y="14" width="1" height="1" fill="#aaa"/><rect x="2" y="9" width="1" height="1" fill="#aaa"/><rect x="14" y="9" width="1" height="1" fill="#aaa"/><rect x="11" y="2" width="1" height="1" fill="#aaa"/><rect x="11" y="14" width="1" height="1" fill="#aaa"/><rect x="2" y="11" width="1" height="1" fill="#aaa"/><rect x="14" y="11" width="1" height="1" fill="#aaa"/><rect x="13" y="2" width="1" height="1" fill="#aaa"/><rect x="13" y="14" width="1" height="1" fill="#aaa"/><rect x="2" y="13" width="1" height="1" fill="#aaa"/><rect x="14" y="13" width="1" height="1" fill="#aaa"/><rect x="15" y="2" width="1" height="1" fill="#aaa"/><rect x="15" y="14" width="1" height="1" fill="#aaa"/><rect x="2" y="15" width="1" height="1" fill="#aaa"/><rect x="14" y="15" width="1" height="1" fill="#aaa"/><rect x="1" y="1" width="3" height="3" fill="#bbb"/><rect x="1" y="13" width="3" height="3" fill="#bbb"/><rect x="13" y="1" width="3" height="3" fill="#bbb"/><rect x="13" y="13" width="3" height="3" fill="#bbb"/></svg>
<svg style="position:absolute;left:936px;top:157px;" width="18" height="17" viewBox="0 0 18 17"><rect x="15" y="1" width="1" height="1" fill="#aaa"/><rect x="1" y="15" width="1" height="1" fill="#aaa"/><rect x="15" y="3" width="1" height="1" fill="#aaa"/><rect x="3" y="15" width="1" height="1" fill="#aaa"/><rect x="15" y="5" width="1" height="1" fill="#aaa"/><rect x="5" y="15" width="1" height="1" fill="#aaa"/><rect x="15" y="7" width="1" height="1" fill="#aaa"/><rect x="7" y="15" width="1" height="1" fill="#aaa"/><rect x="15" y="9" width="1" height="1" fill="#aaa"/><rect x="9" y="15" width="1" height="1" fill="#aaa"/><rect x="15" y="11" width="1" height="1" fill="#aaa"/><rect x="11" y="15" width="1" height="1" fill="#aaa"/><rect x="15" y="13" width="1" height="1" fill="#aaa"/><rect x="13" y="15" width="1" height="1" fill="#aaa"/><rect x="15" y="15" width="1" height="1" fill="#aaa"/><rect x="15" y="15" width="1" height="1" fill="#aaa"/><path d="M5 3v6a3 3 0 0 0 6 0V3" stroke="#ec5b7d" stroke-width="2.2" fill="none"/><rect x="13" y="13" width="3" height="3" fill="#bbb"/></svg>
<div style="left:958px;top:157px;width:1px;height:17px;background:#505050;"></div>
<svg style="position:absolute;left:965px;top:157px;" width="18" height="17" viewBox="0 0 18 17"><g transform="translate(9 8.5)"><circle r="4.6" fill="none" stroke="#b0b0b0" stroke-width="2.6"/><rect x="-1.3" y="-7.6" width="2.6" height="3.4" fill="#b0b0b0" transform="rotate(0)"/><rect x="-1.3" y="-7.6" width="2.6" height="3.4" fill="#b0b0b0" transform="rotate(45)"/><rect x="-1.3" y="-7.6" width="2.6" height="3.4" fill="#b0b0b0" transform="rotate(90)"/><rect x="-1.3" y="-7.6" width="2.6" height="3.4" fill="#b0b0b0" transform="rotate(135)"/><rect x="-1.3" y="-7.6" width="2.6" height="3.4" fill="#b0b0b0" transform="rotate(180)"/><rect x="-1.3" y="-7.6" width="2.6" height="3.4" fill="#b0b0b0" transform="rotate(225)"/><rect x="-1.3" y="-7.6" width="2.6" height="3.4" fill="#b0b0b0" transform="rotate(270)"/><rect x="-1.3" y="-7.6" width="2.6" height="3.4" fill="#b0b0b0" transform="rotate(315)"/></g></svg>
<svg style="position:absolute;left:985px;top:167px;" width="9" height="6" viewBox="0 0 9 6"><path d="M0 0h9L4.5 5z" fill="#e8e8e8"/></svg>
<svg style="position:absolute;left:465px;top:184px;shape-rendering:crispEdges" width="462" height="265" viewBox="0 0 462 265"><defs><linearGradient id="bg0" x1="0" x2="1" y1="0" y2="0"><stop offset="0" stop-color="#dda46e"/><stop offset="0.45" stop-color="#c07a45"/><stop offset="0.6" stop-color="#c07a45"/><stop offset="1" stop-color="#a8622e"/></linearGradient><linearGradient id="bg1" x1="0" x2="1" y1="0" y2="0"><stop offset="0" stop-color="#bcc694"/><stop offset="0.45" stop-color="#98a568"/><stop offset="0.6" stop-color="#98a568"/><stop offset="1" stop-color="#7a8650"/></linearGradient><linearGradient id="bg2" x1="0" x2="1" y1="0" y2="0"><stop offset="0" stop-color="#ffd454"/><stop offset="0.45" stop-color="#f6b71c"/><stop offset="0.6" stop-color="#f6b71c"/><stop offset="1" stop-color="#e4a000"/></linearGradient><linearGradient id="bg3" x1="0" x2="1" y1="0" y2="0"><stop offset="0" stop-color="#f2d458"/><stop offset="0.45" stop-color="#e2bb34"/><stop offset="0.6" stop-color="#e2bb34"/><stop offset="1" stop-color="#caa020"/></linearGradient><linearGradient id="bg4" x1="0" x2="1" y1="0" y2="0"><stop offset="0" stop-color="#f2ac56"/><stop offset="0.45" stop-color="#e28e30"/><stop offset="0.6" stop-color="#e28e30"/><stop offset="1" stop-color="#cc7820"/></linearGradient><linearGradient id="bg5" x1="0" x2="1" y1="0" y2="0"><stop offset="0" stop-color="#b2b272"/><stop offset="0.45" stop-color="#969650"/><stop offset="0.6" stop-color="#969650"/><stop offset="1" stop-color="#7e7e3c"/></linearGradient><linearGradient id="bg6" x1="0" x2="1" y1="0" y2="0"><stop offset="0" stop-color="#e4cc90"/><stop offset="0.45" stop-color="#cdb070"/><stop offset="0.6" stop-color="#cdb070"/><stop offset="1" stop-color="#b4965a"/></linearGradient><linearGradient id="bg7" x1="0" x2="1" y1="0" y2="0"><stop offset="0" stop-color="#92978f"/><stop offset="0.45" stop-color="#727770"/><stop offset="0.6" stop-color="#727770"/><stop offset="1" stop-color="#585d56"/></linearGradient><linearGradient id="bg8" x1="0" x2="1" y1="0" y2="0"><stop offset="0" stop-color="#7f6f9a"/><stop offset="0.45" stop-color="#61537e"/><stop offset="0.6" stop-color="#61537e"/><stop offset="1" stop-color="#4a3e66"/></linearGradient><linearGradient id="bg9" x1="0" x2="1" y1="0" y2="0"><stop offset="0" stop-color="#525d3c"/><stop offset="0.45" stop-color="#3e482c"/><stop offset="0.6" stop-color="#3e482c"/><stop offset="1" stop-color="#2e3822"/></linearGradient></defs><rect x="0" y="0" width="462" height="265" fill="#fdfdfb"/><rect x="34" y="16" width="324" height="215" fill="#f4f4f0"/><rect x="49.5" y="16" width="32.45" height="215" fill="#eeede2"/><rect x="114.4" y="16" width="32.45000000000002" height="215" fill="#eeede2"/><rect x="179.3" y="16" width="32.44999999999999" height="215" fill="#eeede2"/><rect x="244.20000000000002" y="16" width="32.45000000000002" height="215" fill="#eeede2"/><rect x="309.1" y="16" width="32.44999999999999" height="215" fill="#eeede2"/><rect x="49.0" y="16" width="1" height="215" fill="#dedcc6"/><rect x="81.45" y="16" width="1" height="215" fill="#dedcc6"/><rect x="113.9" y="16" width="1" height="215" fill="#dedcc6"/><rect x="146.35000000000002" y="16" width="1" height="215" fill="#dedcc6"/><rect x="178.8" y="16" width="1" height="215" fill="#dedcc6"/><rect x="211.25" y="16" width="1" height="215" fill="#dedcc6"/><rect x="243.70000000000002" y="16" width="1" height="215" fill="#dedcc6"/><rect x="276.15000000000003" y="16" width="1" height="215" fill="#dedcc6"/><rect x="308.6" y="16" width="1" height="215" fill="#dedcc6"/><rect x="341.05" y="16" width="1" height="215" fill="#dedcc6"/><rect x="34" y="186.75" width="324" height="1" fill="#dedcc6"/><rect x="34" y="143.0" width="324" height="1" fill="#dedcc6"/><rect x="34" y="99.25" width="324" height="1" fill="#dedcc6"/><rect x="34" y="55.5" width="324" height="1" fill="#dedcc6"/><rect x="34" y="16" width="324" height="1" fill="#c9d0ae"/><rect x="357" y="16" width="1" height="215" fill="#dfe3cc"/><rect x="34" y="16" width="1" height="216" fill="#56663a"/><rect x="34" y="231" width="324" height="1" fill="#56663a"/><rect x="28" y="231" width="6" height="1" fill="#56663a"/><text x="24" y="235.0" text-anchor="end" font-size="11" font-family="Liberation Sans" fill="#16164a">0</text><rect x="31" y="216" width="3" height="1" fill="#56663a"/><rect x="31" y="202" width="3" height="1" fill="#56663a"/><rect x="28" y="187" width="6" height="1" fill="#56663a"/><text x="24" y="191.25" text-anchor="end" font-size="11" font-family="Liberation Sans" fill="#16164a">20</text><rect x="31" y="173" width="3" height="1" fill="#56663a"/><rect x="31" y="158" width="3" height="1" fill="#56663a"/><rect x="28" y="144" width="6" height="1" fill="#56663a"/><text x="24" y="147.5" text-anchor="end" font-size="11" font-family="Liberation Sans" fill="#16164a">40</text><rect x="31" y="129" width="3" height="1" fill="#56663a"/><rect x="31" y="114" width="3" height="1" fill="#56663a"/><rect x="28" y="100" width="6" height="1" fill="#56663a"/><text x="24" y="103.75" text-anchor="end" font-size="11" font-family="Liberation Sans" fill="#16164a">60</text><rect x="31" y="85" width="3" height="1" fill="#56663a"/><rect x="31" y="71" width="3" height="1" fill="#56663a"/><rect x="28" y="56" width="6" height="1" fill="#56663a"/><text x="24" y="60.0" text-anchor="end" font-size="11" font-family="Liberation Sans" fill="#16164a">80</text><rect x="31" y="41" width="3" height="1" fill="#56663a"/><rect x="31" y="27" width="3" height="1" fill="#56663a"/><rect x="37" y="231" width="1" height="4" fill="#56663a"/><rect x="43" y="231" width="1" height="4" fill="#56663a"/><rect x="50" y="231" width="1" height="7" fill="#56663a"/><rect x="56" y="231" width="1" height="4" fill="#56663a"/><rect x="62" y="231" width="1" height="4" fill="#56663a"/><rect x="69" y="231" width="1" height="4" fill="#56663a"/><rect x="75" y="231" width="1" height="4" fill="#56663a"/><rect x="82" y="231" width="1" height="7" fill="#56663a"/><rect x="88" y="231" width="1" height="4" fill="#56663a"/><rect x="95" y="231" width="1" height="4" fill="#56663a"/><rect x="101" y="231" width="1" height="4" fill="#56663a"/><rect x="108" y="231" width="1" height="4" fill="#56663a"/><rect x="114" y="231" width="1" height="7" fill="#56663a"/><rect x="121" y="231" width="1" height="4" fill="#56663a"/><rect x="127" y="231" width="1" height="4" fill="#56663a"/><rect x="134" y="231" width="1" height="4" fill="#56663a"/><rect x="140" y="231" width="1" height="4" fill="#56663a"/><rect x="147" y="231" width="1" height="7" fill="#56663a"/><rect x="153" y="231" width="1" height="4" fill="#56663a"/><rect x="160" y="231" width="1" height="4" fill="#56663a"/><rect x="166" y="231" width="1" height="4" fill="#56663a"/><rect x="173" y="231" width="1" height="4" fill="#56663a"/><rect x="179" y="231" width="1" height="7" fill="#56663a"/><rect x="186" y="231" width="1" height="4" fill="#56663a"/><rect x="192" y="231" width="1" height="4" fill="#56663a"/><rect x="199" y="231" width="1" height="4" fill="#56663a"/><rect x="205" y="231" width="1" height="4" fill="#56663a"/><rect x="212" y="231" width="1" height="7" fill="#56663a"/><rect x="218" y="231" width="1" height="4" fill="#56663a"/><rect x="225" y="231" width="1" height="4" fill="#56663a"/><rect x="231" y="231" width="1" height="4" fill="#56663a"/><rect x="238" y="231" width="1" height="4" fill="#56663a"/><rect x="244" y="231" width="1" height="7" fill="#56663a"/><rect x="251" y="231" width="1" height="4" fill="#56663a"/><rect x="257" y="231" width="1" height="4" fill="#56663a"/><rect x="264" y="231" width="1" height="4" fill="#56663a"/><rect x="270" y="231" width="1" height="4" fill="#56663a"/><rect x="277" y="231" width="1" height="7" fill="#56663a"/><rect x="283" y="231" width="1" height="4" fill="#56663a"/><rect x="290" y="231" width="1" height="4" fill="#56663a"/><rect x="296" y="231" width="1" height="4" fill="#56663a"/><rect x="303" y="231" width="1" height="4" fill="#56663a"/><rect x="309" y="231" width="1" height="7" fill="#56663a"/><rect x="316" y="231" width="1" height="4" fill="#56663a"/><rect x="322" y="231" width="1" height="4" fill="#56663a"/><rect x="329" y="231" width="1" height="4" fill="#56663a"/><rect x="335" y="231" width="1" height="4" fill="#56663a"/><rect x="342" y="231" width="1" height="7" fill="#56663a"/><rect x="348" y="231" width="1" height="4" fill="#56663a"/><rect x="355" y="231" width="1" height="4" fill="#56663a"/><text x="49.5" y="248" text-anchor="middle" font-size="11" font-family="Liberation Sans" fill="#16164a">1</text><text x="81.95" y="248" text-anchor="middle" font-size="11" font-family="Liberation Sans" fill="#16164a">2</text><text x="114.4" y="248" text-anchor="middle" font-size="11" font-family="Liberation Sans" fill="#16164a">3</text><text x="146.85000000000002" y="248" text-anchor="middle" font-size="11" font-family="Liberation Sans" fill="#16164a">4</text><text x="179.3" y="248" text-anchor="middle" font-size="11" font-family="Liberation Sans" fill="#16164a">5</text><text x="211.75" y="248" text-anchor="middle" font-size="11" font-family="Liberation Sans" fill="#16164a">6</text><text x="244.20000000000002" y="248" text-anchor="middle" font-size="11" font-family="Liberation Sans" fill="#16164a">7</text><text x="276.65000000000003" y="248" text-anchor="middle" font-size="11" font-family="Liberation Sans" fill="#16164a">8</text><text x="309.1" y="248" text-anchor="middle" font-size="11" font-family="Liberation Sans" fill="#16164a">9</text><text x="341.55" y="248" text-anchor="middle" font-size="11" font-family="Liberation Sans" fill="#16164a">10</text><rect x="39.5" y="88.19999999999999" width="20" height="142.8" fill="url(#bg0)" stroke="#8a4a20" stroke-width="1"/><rect x="50.0" y="78.19999999999999" width="1" height="10" fill="#8a4a20"/><rect x="34.0" y="63.19999999999999" width="33" height="15" fill="#ffffff" stroke="#8a4a20" stroke-width="1"/><text x="50.5" y="74.69999999999999" text-anchor="middle" font-size="11" font-family="Liberation Sans" fill="#8a4a20">65.28</text><rect x="71.95" y="83.60625000000002" width="20" height="147.39374999999998" fill="url(#bg1)" stroke="#5e6a3a" stroke-width="1"/><rect x="82.45" y="73.60625000000002" width="1" height="10" fill="#5e6a3a"/><rect x="66.45" y="58.60625000000002" width="33" height="15" fill="#ffffff" stroke="#5e6a3a" stroke-width="1"/><text x="82.95" y="70.10625000000002" text-anchor="middle" font-size="11" font-family="Liberation Sans" fill="#4f5c32">67.38</text><rect x="104.4" y="101.0625" width="20" height="129.9375" fill="url(#bg2)" stroke="#b47c00" stroke-width="1"/><rect x="114.9" y="91.0625" width="1" height="10" fill="#b47c00"/><rect x="102.4" y="76.0625" width="26" height="15" fill="#ffffff" stroke="#b47c00" stroke-width="1"/><text x="115.4" y="87.5625" text-anchor="middle" font-size="11" font-family="Liberation Sans" fill="#a87400">59.4</text><rect x="136.85000000000002" y="92.071875" width="20" height="138.928125" fill="url(#bg3)" stroke="#a07a10" stroke-width="1"/><rect x="147.35000000000002" y="82.071875" width="1" height="10" fill="#a07a10"/><rect x="131.35000000000002" y="67.071875" width="33" height="15" fill="#ffffff" stroke="#a07a10" stroke-width="1"/><text x="147.85000000000002" y="78.571875" text-anchor="middle" font-size="11" font-family="Liberation Sans" fill="#9a7410">63.51</text><rect x="169.3" y="154.02187500000002" width="20" height="76.97812499999998" fill="url(#bg4)" stroke="#a05810" stroke-width="1"/><rect x="179.8" y="144.02187500000002" width="1" height="10" fill="#a05810"/><rect x="163.8" y="129.02187500000002" width="33" height="15" fill="#ffffff" stroke="#a05810" stroke-width="1"/><text x="180.3" y="140.52187500000002" text-anchor="middle" font-size="11" font-family="Liberation Sans" fill="#9a5610">35.19</text><rect x="201.75" y="133.875" width="20" height="97.125" fill="url(#bg5)" stroke="#5a5a28" stroke-width="1"/><rect x="212.25" y="123.875" width="1" height="10" fill="#5a5a28"/><rect x="199.75" y="108.875" width="26" height="15" fill="#ffffff" stroke="#5a5a28" stroke-width="1"/><text x="212.75" y="120.375" text-anchor="middle" font-size="11" font-family="Liberation Sans" fill="#50502a">44.4</text><rect x="234.20000000000002" y="88.65937500000001" width="20" height="142.340625" fill="url(#bg6)" stroke="#8a7040" stroke-width="1"/><rect x="244.70000000000002" y="78.65937500000001" width="1" height="10" fill="#8a7040"/><rect x="228.70000000000002" y="63.65937500000001" width="33" height="15" fill="#ffffff" stroke="#8a7040" stroke-width="1"/><text x="245.20000000000002" y="75.15937500000001" text-anchor="middle" font-size="11" font-family="Liberation Sans" fill="#7a6232">65.07</text><rect x="266.65000000000003" y="132.453125" width="20" height="98.546875" fill="url(#bg7)" stroke="#3a3f38" stroke-width="1"/><rect x="277.15000000000003" y="122.453125" width="1" height="10" fill="#3a3f38"/><rect x="261.15000000000003" y="107.453125" width="33" height="15" fill="#ffffff" stroke="#3a3f38" stroke-width="1"/><text x="277.65000000000003" y="118.953125" text-anchor="middle" font-size="11" font-family="Liberation Sans" fill="#2c312a">45.05</text><rect x="299.1" y="80.959375" width="20" height="150.040625" fill="url(#bg8)" stroke="#3a3050" stroke-width="1"/><rect x="309.6" y="70.959375" width="1" height="10" fill="#3a3050"/><rect x="293.6" y="55.959374999999994" width="33" height="15" fill="#ffffff" stroke="#3a3050" stroke-width="1"/><text x="310.1" y="67.459375" text-anchor="middle" font-size="11" font-family="Liberation Sans" fill="#2e2844">68.59</text><rect x="331.55" y="35.634375000000006" width="20" height="195.365625" fill="url(#bg9)" stroke="#1f2818" stroke-width="1"/><rect x="342.05" y="25.634375000000006" width="1" height="10" fill="#1f2818"/><rect x="326.05" y="10.634375000000006" width="33" height="15" fill="#ffffff" stroke="#1f2818" stroke-width="1"/><text x="342.55" y="22.134375000000006" text-anchor="middle" font-size="11" font-family="Liberation Sans" fill="#1f2818">89.31</text><rect x="368.5" y="10.5" width="81" height="183" fill="#f0efe6" stroke="#cdd4b4"/><rect x="372.5" y="14.5" width="17" height="13" fill="url(#bg0)" stroke="#8a4a20"/><text x="396" y="25" font-size="11" font-family="Liberation Sans" fill="#141430">1: 65.28</text><rect x="372.5" y="32.5" width="17" height="13" fill="url(#bg1)" stroke="#5e6a3a"/><text x="396" y="43" font-size="11" font-family="Liberation Sans" fill="#141430">2: 67.38</text><rect x="372.5" y="50.5" width="17" height="13" fill="url(#bg2)" stroke="#b47c00"/><text x="396" y="61" font-size="11" font-family="Liberation Sans" fill="#141430">3: 59.4</text><rect x="372.5" y="68.5" width="17" height="13" fill="url(#bg3)" stroke="#a07a10"/><text x="396" y="79" font-size="11" font-family="Liberation Sans" fill="#141430">4: 63.51</text><rect x="372.5" y="86.5" width="17" height="13" fill="url(#bg4)" stroke="#a05810"/><text x="396" y="97" font-size="11" font-family="Liberation Sans" fill="#141430">5: 35.19</text><rect x="372.5" y="104.5" width="17" height="13" fill="url(#bg5)" stroke="#5a5a28"/><text x="396" y="115" font-size="11" font-family="Liberation Sans" fill="#141430">6: 44.4</text><rect x="372.5" y="122.5" width="17" height="13" fill="url(#bg6)" stroke="#8a7040"/><text x="396" y="133" font-size="11" font-family="Liberation Sans" fill="#141430">7: 65.07</text><rect x="372.5" y="140.5" width="17" height="13" fill="url(#bg7)" stroke="#3a3f38"/><text x="396" y="151" font-size="11" font-family="Liberation Sans" fill="#141430">8: 45.05</text><rect x="372.5" y="158.5" width="17" height="13" fill="url(#bg8)" stroke="#3a3050"/><text x="396" y="169" font-size="11" font-family="Liberation Sans" fill="#141430">9: 68.59</text><rect x="372.5" y="176.5" width="17" height="13" fill="url(#bg9)" stroke="#1f2818"/><text x="396" y="187" font-size="11" font-family="Liberation Sans" fill="#141430">10: 89.31</text></svg>
<div style="left:464px;top:183px;width:462px;height:265px;background:transparent;box-sizing:border-box;border:1px dashed #000;"></div>
<div style="left:717px;top:179px;width:204px;height:4px;background:#000;"></div>
<div style="left:460px;top:179px;width:8px;height:8px;background:#000;box-sizing:border-box;border:1px solid #fff;"></div>
<div style="left:691px;top:179px;width:8px;height:8px;background:#000;box-sizing:border-box;border:1px solid #fff;"></div>
<div style="left:921px;top:179px;width:8px;height:8px;background:#000;box-sizing:border-box;border:1px solid #fff;"></div>
<div style="left:460px;top:311px;width:8px;height:8px;background:#000;box-sizing:border-box;border:1px solid #fff;"></div>
<div style="left:921px;top:311px;width:8px;height:8px;background:#000;box-sizing:border-box;border:1px solid #fff;"></div>
<div style="left:460px;top:443px;width:8px;height:8px;background:#000;box-sizing:border-box;border:1px solid #fff;"></div>
<div style="left:691px;top:443px;width:8px;height:8px;background:#000;box-sizing:border-box;border:1px solid #fff;"></div>
<div style="left:921px;top:443px;width:8px;height:8px;background:#000;box-sizing:border-box;border:1px solid #fff;"></div>
<div style="left:1165px;top:152px;width:201px;height:558px;background:#3b3b3b;"></div>
<div style="left:1165px;top:152px;width:201px;height:26px;background:#3f3f3f;"></div>
<div class="t" style="left:1172px;top:158px;font-size:16px;line-height:16px;color:#a9a9a9;font-weight:400;letter-spacing:-0.046px;">Properties window</div>
<svg style="position:absolute;left:1329px;top:157px;" width="12" height="14" viewBox="0 0 12 14"><path d="M3 1.5h6M4 1.5v6h4v-6M1.5 8h9M6 8v5" stroke="#cfcfcf" stroke-width="1.4" fill="none"/></svg>
<svg style="position:absolute;left:1346px;top:157px;" width="13" height="13" viewBox="0 0 13 13"><path d="M2 2l9 9M11 2l-9 9" stroke="#cfcfcf" stroke-width="1.6"/></svg>
<svg style="position:absolute;left:1171px;top:185px;" width="8" height="8" viewBox="0 0 8 8"><path d="M7 1v6H1z" fill="#f0f0f0"/></svg>
<div class="t" style="left:1184px;top:182px;font-size:12px;line-height:12px;color:#f0f0f0;font-weight:700;letter-spacing:-0.275px;">Common settings</div>
<div style="left:1181px;top:198px;width:86px;height:18px;background:#262626;"></div>
<div style="left:1268px;top:198px;width:80px;height:18px;background:#262626;"></div>
<div class="t" style="left:1184px;top:201px;font-size:12px;line-height:12px;color:#6c6c6c;font-weight:400;width:81px;overflow:hidden;white-space:nowrap">Type</div>
<div class="t" style="left:1271px;top:201px;font-size:12px;line-height:12px;color:#6c6c6c;font-weight:400;">Chart</div>
<div style="left:1181px;top:217px;width:86px;height:18px;background:#262626;"></div>
<div style="left:1268px;top:217px;width:80px;height:18px;background:#262626;"></div>
<div class="t" style="left:1184px;top:220px;font-size:12px;line-height:12px;color:#ececec;font-weight:400;width:81px;overflow:hidden;white-space:nowrap">Object name</div>
<div class="t" style="left:1271px;top:220px;font-size:12px;line-height:12px;color:#ececec;font-weight:400;">Chart 1</div>
<div style="left:1181px;top:236px;width:86px;height:18px;background:#262626;"></div>
<div style="left:1268px;top:236px;width:80px;height:18px;background:#262626;"></div>
<div class="t" style="left:1184px;top:239px;font-size:12px;line-height:12px;color:#ececec;font-weight:400;width:81px;overflow:hidden;white-space:nowrap">Composition m</div>
<div class="t" style="left:1271px;top:239px;font-size:12px;line-height:12px;color:#ececec;font-weight:400;">Blend</div>
<svg style="position:absolute;left:1172px;top:241px;" width="6" height="8" viewBox="0 0 6 8"><path d="M1.5 1l3.5 3-3.5 3z" fill="#d8d8d8"/></svg>
<div style="left:1181px;top:255px;width:167px;height:19px;background:#404040;"></div>
<svg style="position:absolute;left:1185px;top:261px;" width="8" height="8" viewBox="0 0 8 8"><path d="M7 1v6H1z" fill="#f0f0f0"/></svg>
<div class="t" style="left:1198px;top:258px;font-size:12px;line-height:12px;color:#f0f0f0;font-weight:700;">Coordinates</div>
<div style="left:1195px;top:274px;width:72px;height:18px;background:#262626;"></div>
<div style="left:1268px;top:274px;width:80px;height:18px;background:#262626;"></div>
<div class="t" style="left:1198px;top:277px;font-size:12px;line-height:12px;color:#ececec;font-weight:400;width:67px;overflow:hidden;white-space:nowrap">Left</div>
<div class="t" style="left:1271px;top:277px;font-size:12px;line-height:12px;color:#ececec;font-weight:400;letter-spacing:-0.334px;">-37.000</div>
<div style="left:1195px;top:293px;width:72px;height:18px;background:#262626;"></div>
<div style="left:1268px;top:293px;width:80px;height:18px;background:#262626;"></div>
<div class="t" style="left:1198px;top:296px;font-size:12px;line-height:12px;color:#ececec;font-weight:400;width:67px;overflow:hidden;white-space:nowrap">Top</div>
<div class="t" style="left:1271px;top:296px;font-size:12px;line-height:12px;color:#ececec;font-weight:400;letter-spacing:-0.508px;">0.000</div>
<div style="left:1195px;top:312px;width:72px;height:18px;background:#262626;"></div>
<div style="left:1268px;top:312px;width:80px;height:18px;background:#262626;"></div>
<div class="t" style="left:1198px;top:315px;font-size:12px;line-height:12px;color:#ececec;font-weight:400;width:67px;overflow:hidden;white-space:nowrap">Width</div>
<div class="t" style="left:1271px;top:315px;font-size:12px;line-height:12px;color:#ececec;font-weight:400;letter-spacing:-0.580px;">1317.000</div>
<div style="left:1195px;top:331px;width:72px;height:18px;background:#262626;"></div>
<div style="left:1268px;top:331px;width:80px;height:18px;background:#262626;"></div>
<div class="t" style="left:1198px;top:334px;font-size:12px;line-height:12px;color:#ececec;font-weight:400;width:67px;overflow:hidden;white-space:nowrap">Height</div>
<div class="t" style="left:1271px;top:334px;font-size:12px;line-height:12px;color:#ececec;font-weight:400;letter-spacing:-0.482px;">754.000</div>
<div style="left:1181px;top:350px;width:167px;height:19px;background:#d6eeea;"></div>
<div class="t" style="left:1188px;top:354px;font-size:11px;line-height:11px;color:#327f75;font-weight:400;letter-spacing:-0.632px;">Set the same size as the parent has</div>
<div style="left:1181px;top:369px;width:167px;height:19px;background:#404040;"></div>
<svg style="position:absolute;left:1185px;top:375px;" width="8" height="8" viewBox="0 0 8 8"><path d="M7 1v6H1z" fill="#f0f0f0"/></svg>
<div class="t" style="left:1198px;top:372px;font-size:12px;line-height:12px;color:#f0f0f0;font-weight:700;">Object creation time</div>
<div style="left:1195px;top:388px;width:72px;height:18px;background:#262626;"></div>
<div style="left:1268px;top:388px;width:80px;height:18px;background:#262626;"></div>
<div class="t" style="left:1198px;top:391px;font-size:12px;line-height:12px;color:#ececec;font-weight:400;width:67px;overflow:hidden;white-space:nowrap">Time (ms)</div>
<div class="t" style="left:1271px;top:391px;font-size:12px;line-height:12px;color:#ececec;font-weight:400;letter-spacing:-0.571px;">00:00:00.000</div>
<div style="left:1195px;top:407px;width:72px;height:18px;background:#262626;"></div>
<div style="left:1268px;top:407px;width:80px;height:18px;background:#262626;"></div>
<div class="t" style="left:1198px;top:410px;font-size:12px;line-height:12px;color:#ececec;font-weight:400;width:67px;overflow:hidden;white-space:nowrap">Time (frame)</div>
<div class="t" style="left:1271px;top:410px;font-size:12px;line-height:12px;color:#ececec;font-weight:400;">0</div>
<div style="left:1195px;top:426px;width:72px;height:18px;background:#262626;"></div>
<div style="left:1268px;top:426px;width:80px;height:18px;background:#262626;"></div>
<div class="t" style="left:1198px;top:429px;font-size:12px;line-height:12px;color:#ececec;font-weight:400;width:67px;overflow:hidden;white-space:nowrap">Lock to parer</div>
<div class="t" style="left:1271px;top:429px;font-size:12px;line-height:12px;color:#ececec;font-weight:400;">No</div>
<div style="left:1181px;top:445px;width:167px;height:19px;background:#404040;"></div>
<svg style="position:absolute;left:1185px;top:451px;" width="8" height="8" viewBox="0 0 8 8"><path d="M7 1v6H1z" fill="#f0f0f0"/></svg>
<div class="t" style="left:1198px;top:448px;font-size:12px;line-height:12px;color:#f0f0f0;font-weight:700;letter-spacing:-0.137px;">Object drawing duration</div>
<div style="left:1195px;top:464px;width:72px;height:18px;background:#262626;"></div>
<div style="left:1268px;top:464px;width:80px;height:18px;background:#262626;"></div>
<div class="t" style="left:1198px;top:467px;font-size:12px;line-height:12px;color:#ececec;font-weight:400;width:67px;overflow:hidden;white-space:nowrap">Duration (ms</div>
<div class="t" style="left:1271px;top:467px;font-size:12px;line-height:12px;color:#ececec;font-weight:400;letter-spacing:-0.571px;">00:00:10.040</div>
<div style="left:1195px;top:483px;width:72px;height:18px;background:#262626;"></div>
<div style="left:1268px;top:483px;width:80px;height:18px;background:#262626;"></div>
<div class="t" style="left:1198px;top:486px;font-size:12px;line-height:12px;color:#ececec;font-weight:400;width:67px;overflow:hidden;white-space:nowrap">Duration (fra</div>
<div class="t" style="left:1271px;top:486px;font-size:12px;line-height:12px;color:#ececec;font-weight:400;">251</div>
<div style="left:1195px;top:502px;width:72px;height:18px;background:#262626;"></div>
<div style="left:1268px;top:502px;width:80px;height:18px;background:#262626;"></div>
<div class="t" style="left:1198px;top:505px;font-size:12px;line-height:12px;color:#ececec;font-weight:400;width:67px;overflow:hidden;white-space:nowrap">Lock to parer</div>
<div class="t" style="left:1271px;top:505px;font-size:12px;line-height:12px;color:#ececec;font-weight:400;">No</div>
<svg style="position:absolute;left:1173px;top:527px;" width="6" height="8" viewBox="0 0 6 8"><path d="M1.5 1l3.5 3-3.5 3z" fill="#d8d8d8"/></svg>
<div class="t" style="left:1184px;top:524px;font-size:12px;line-height:12px;color:#f0f0f0;font-weight:700;letter-spacing:-0.315px;">Chart object's colors</div>
<svg style="position:absolute;left:1173px;top:546px;" width="6" height="8" viewBox="0 0 6 8"><path d="M1.5 1l3.5 3-3.5 3z" fill="#d8d8d8"/></svg>
<div class="t" style="left:1184px;top:543px;font-size:12px;line-height:12px;color:#f0f0f0;font-weight:700;">Appearance</div>
<svg style="position:absolute;left:1173px;top:565px;" width="6" height="8" viewBox="0 0 6 8"><path d="M1.5 1l3.5 3-3.5 3z" fill="#d8d8d8"/></svg>
<div class="t" style="left:1184px;top:562px;font-size:12px;line-height:12px;color:#f0f0f0;font-weight:700;">Behavior</div>
<svg style="position:absolute;left:1173px;top:584px;" width="6" height="8" viewBox="0 0 6 8"><path d="M1.5 1l3.5 3-3.5 3z" fill="#d8d8d8"/></svg>
<div class="t" style="left:1184px;top:581px;font-size:12px;line-height:12px;color:#f0f0f0;font-weight:700;">Legend</div>
<svg style="position:absolute;left:1171px;top:603px;" width="8" height="8" viewBox="0 0 8 8"><path d="M7 1v6H1z" fill="#f0f0f0"/></svg>
<div class="t" style="left:1184px;top:600px;font-size:12px;line-height:12px;color:#f0f0f0;font-weight:700;">Titles</div>
<div style="left:1181px;top:616px;width:167px;height:9px;background:#d6eeea;"></div>
<div class="t" style="left:1247px;top:619px;font-size:11px;line-height:11px;color:#3f8f85;font-weight:400;">Add title</div>
<div style="left:1165px;top:625px;width:201px;height:61px;background:#262626;"></div>
<div style="left:1165px;top:625px;width:201px;height:2px;background:#3a3a3a;"></div>
<div style="left:1349px;top:179px;width:15px;height:446px;background:#efefef;"></div>
<div style="left:1349px;top:196px;width:15px;height:146px;background:#cdcdcd;"></div>
<div style="left:1349px;top:179px;width:15px;height:17px;background:#f6f6f6;"></div>
<svg style="position:absolute;left:1351px;top:184px;" width="11" height="7" viewBox="0 0 11 7"><path d="M1 6l4.5-4.5L10 6" stroke="#555" stroke-width="1.6" fill="none"/></svg>
<div style="left:1349px;top:607px;width:15px;height:18px;background:#f6f6f6;"></div>
<svg style="position:absolute;left:1351px;top:613px;" width="11" height="7" viewBox="0 0 11 7"><path d="M1 1l4.5 4.5L10 1" stroke="#555" stroke-width="1.6" fill="none"/></svg>
<div style="left:1165px;top:686px;width:201px;height:22px;background:#383838;"></div>
<div style="left:1166px;top:686px;width:99px;height:22px;background:#262626;"></div>
<div style="left:1166px;top:705px;width:99px;height:2px;background:#3a9a8e;"></div>
<div class="t" style="left:1172px;top:692px;font-size:12px;line-height:12px;color:#3fa596;font-weight:400;letter-spacing:-0.128px;">Properties win...</div>
<div class="t" style="left:1272px;top:692px;font-size:12px;line-height:12px;color:#b8b8b8;font-weight:400;letter-spacing:-0.247px;">Resources win...</div>
<div style="left:0px;top:469px;width:1162px;height:27px;background:#383838;"></div>
<div style="left:0px;top:470px;width:961px;height:26px;background:#343434;box-sizing:border-box;border:1px solid #555;"></div>
<svg style="position:absolute;left:3px;top:474px;" width="6" height="19" viewBox="0 0 6 19"><rect x="0" y="0" width="1" height="1" fill="#6a6a6a"/><rect x="2" y="2" width="1" height="1" fill="#6a6a6a"/><rect x="0" y="4" width="1" height="1" fill="#6a6a6a"/><rect x="2" y="6" width="1" height="1" fill="#6a6a6a"/><rect x="0" y="8" width="1" height="1" fill="#6a6a6a"/><rect x="2" y="10" width="1" height="1" fill="#6a6a6a"/><rect x="0" y="12" width="1" height="1" fill="#6a6a6a"/><rect x="2" y="14" width="1" height="1" fill="#6a6a6a"/><rect x="0" y="16" width="1" height="1" fill="#6a6a6a"/></svg>
<svg style="position:absolute;left:12px;top:474px;" width="18" height="18" viewBox="0 0 18 18"><circle cx="9" cy="9" r="7.6" fill="none" stroke="#c8c8c8" stroke-width="1.3"/><path d="M9 4.5v9M4.5 9h9" stroke="#e0e0e0" stroke-width="2"/></svg>
<svg style="position:absolute;left:34px;top:474px;" width="18" height="18" viewBox="0 0 18 18"><circle cx="9" cy="9" r="7.6" fill="none" stroke="#c8c8c8" stroke-width="1.3"/><path d="M4.5 9h9" stroke="#e0e0e0" stroke-width="2"/></svg>
<svg style="position:absolute;left:56px;top:474px;" width="18" height="18" viewBox="0 0 18 18"><circle cx="9" cy="9" r="7.6" fill="none" stroke="#c8c8c8" stroke-width="1.3"/><text x="9" y="12" text-anchor="middle" font-size="8" font-family="Liberation Sans" fill="#e0e0e0" letter-spacing="-0.8">100</text></svg>
<div class="t" style="left:277px;top:478px;font-size:12px;line-height:12px;color:#e0e0e0;font-weight:400;">080p</div>
<svg style="position:absolute;left:308px;top:480px;" width="9" height="6" viewBox="0 0 9 6"><path d="M0 0h9L4.5 5z" fill="#d8d8d8"/></svg>
<svg style="position:absolute;left:323px;top:477px;" width="12" height="12" viewBox="0 0 12 12"><path d="M1 1l10 5-10 5z" fill="#ec5b7d"/></svg>
<svg style="position:absolute;left:343px;top:477px;" width="15" height="12" viewBox="0 0 15 12"><path d="M1.5 1v10M13.5 1v10M1.5 6h12" stroke="#cfcfcf" stroke-width="1.4"/><rect x="4" y="3.5" width="7" height="5" fill="none" stroke="#cfcfcf"/></svg>
<div style="left:362px;top:471px;width:44px;height:24px;background:#4a4a4a;"></div>
<svg style="position:absolute;left:366px;top:476px;" width="14" height="14" viewBox="0 0 14 14"><path d="M2 1.5v11M4.5 4h4a3.5 3.5 0 1 1 0 7H5" stroke="#aaa" stroke-width="1.3" fill="none"/></svg>
<svg style="position:absolute;left:388px;top:476px;" width="15" height="14" viewBox="0 0 15 14"><path d="M12 7a5 5 0 1 1-2-4" stroke="#aaa" stroke-width="1.3" fill="none"/><path d="M8 1l3 2-3 2" stroke="#aaa" fill="none"/></svg>
<div style="left:408px;top:474px;width:1px;height:18px;background:#555;"></div>
<svg style="position:absolute;left:417px;top:477px;" width="13" height="12" viewBox="0 0 13 12"><path d="M1 4h3l4-3v10l-4-3H1z" fill="#d8d8d8"/><path d="M10 3.5a4 4 0 0 1 0 5" stroke="#d8d8d8" fill="none"/></svg>
<div style="left:442px;top:483px;width:4px;height:1px;background:#888;"></div>
<div style="left:452px;top:483px;width:36px;height:1px;background:#8a8a8a;"></div>
<div style="left:469px;top:478px;width:2px;height:10px;background:#8a8a8a;"></div>
<svg style="position:absolute;left:489px;top:478px;" width="10" height="10" viewBox="0 0 10 10"><path d="M5 1v8M1 5h8" stroke="#888" stroke-width="1.2"/></svg>
<svg style="position:absolute;left:505px;top:486px;" width="9" height="6" viewBox="0 0 9 6"><path d="M0 0h9L4.5 5z" fill="#f0f0f0"/></svg>
<div style="left:517px;top:471px;width:1px;height:24px;background:#555;"></div>
<svg style="position:absolute;left:519px;top:474px;" width="4" height="19" viewBox="0 0 4 19"><rect x="0" y="0" width="1" height="1" fill="#6a6a6a"/><rect x="2" y="2" width="1" height="1" fill="#6a6a6a"/><rect x="0" y="4" width="1" height="1" fill="#6a6a6a"/><rect x="2" y="6" width="1" height="1" fill="#6a6a6a"/><rect x="0" y="8" width="1" height="1" fill="#6a6a6a"/><rect x="2" y="10" width="1" height="1" fill="#6a6a6a"/><rect x="0" y="12" width="1" height="1" fill="#6a6a6a"/><rect x="2" y="14" width="1" height="1" fill="#6a6a6a"/><rect x="0" y="16" width="1" height="1" fill="#6a6a6a"/></svg>
<div style="left:525px;top:471px;width:25px;height:24px;background:#4a4a4a;"></div>
<svg style="position:absolute;left:528px;top:474px;" width="19" height="19" viewBox="0 0 19 19"><circle cx="9.5" cy="9.5" r="7.8" fill="none" stroke="#d0d0d0" stroke-width="1.5"/><path d="M9.5 4.5v5h4" stroke="#d0d0d0" stroke-width="1.5" fill="none"/></svg>
<div style="left:551px;top:474px;width:1px;height:18px;background:#555;"></div>
<svg style="position:absolute;left:559px;top:476px;" width="15" height="14" viewBox="0 0 15 14"><rect x="1" y="2" width="2" height="10" fill="#ccc"/><path d="M8 2v10L3 7zM13 2v10L8 7z" fill="#ccc"/></svg>
<svg style="position:absolute;left:581px;top:476px;" width="15" height="14" viewBox="0 0 15 14"><path d="M7 2v10L1 7zM14 2v10L8 7z" fill="#ccc"/></svg>
<svg style="position:absolute;left:604px;top:476px;" width="11" height="14" viewBox="0 0 11 14"><path d="M9 2v10L3 7z" fill="#ccc"/></svg>
<svg style="position:absolute;left:625px;top:476px;" width="15" height="14" viewBox="0 0 15 14"><rect x="6" y="2" width="2.5" height="8" fill="#ccc"/><rect x="2" y="10" width="11" height="2" fill="#ccc"/></svg>
<svg style="position:absolute;left:647px;top:476px;" width="11" height="14" viewBox="0 0 11 14"><path d="M3 2v10l6-5z" fill="#ccc"/></svg>
<svg style="position:absolute;left:668px;top:476px;" width="15" height="14" viewBox="0 0 15 14"><path d="M1 2v10l6-5zM8 2v10l6-5z" fill="#ccc"/></svg>
<svg style="position:absolute;left:690px;top:476px;" width="15" height="14" viewBox="0 0 15 14"><path d="M1 2v10l5-5zM6 2v10l5-5z" fill="#ccc"/><rect x="12" y="2" width="2" height="10" fill="#ccc"/></svg>
<div style="left:711px;top:474px;width:1px;height:18px;background:#555;"></div>
<svg style="position:absolute;left:719px;top:476px;" width="15" height="14" viewBox="0 0 15 14"><rect x="1" y="3" width="13" height="8" fill="none" stroke="#aaa"/><rect x="3" y="4" width="9" height="6" fill="#aaa"/></svg>
<svg style="position:absolute;left:741px;top:476px;" width="15" height="14" viewBox="0 0 15 14"><rect x="1" y="4.5" width="13" height="5" fill="#aaa"/></svg>
<svg style="position:absolute;left:763px;top:476px;" width="15" height="14" viewBox="0 0 15 14"><rect x="1" y="3.5" width="13" height="7" fill="#aaa"/></svg>
<div style="left:784px;top:474px;width:1px;height:18px;background:#555;"></div>
<svg style="position:absolute;left:791px;top:476px;" width="13" height="14" viewBox="0 0 13 14"><rect x="1" y="2" width="1.5" height="10" fill="#ccc"/><path d="M3 7l4-3v6z" fill="#ccc"/><rect x="7" y="6.3" width="5" height="1.4" fill="#ccc"/></svg>
<svg style="position:absolute;left:813px;top:476px;" width="13" height="14" viewBox="0 0 13 14"><rect x="10.5" y="2" width="1.5" height="10" fill="#ccc"/><path d="M10 7l-4-3v6z" fill="#ccc"/><rect x="1" y="6.3" width="5" height="1.4" fill="#ccc"/></svg>
<svg style="position:absolute;left:831px;top:486px;" width="9" height="6" viewBox="0 0 9 6"><path d="M0 0h9L4.5 5z" fill="#f0f0f0"/></svg>
<div style="left:844px;top:471px;width:1px;height:24px;background:#555;"></div>
<svg style="position:absolute;left:846px;top:474px;" width="4" height="19" viewBox="0 0 4 19"><rect x="0" y="0" width="1" height="1" fill="#6a6a6a"/><rect x="2" y="2" width="1" height="1" fill="#6a6a6a"/><rect x="0" y="4" width="1" height="1" fill="#6a6a6a"/><rect x="2" y="6" width="1" height="1" fill="#6a6a6a"/><rect x="0" y="8" width="1" height="1" fill="#6a6a6a"/><rect x="2" y="10" width="1" height="1" fill="#6a6a6a"/><rect x="0" y="12" width="1" height="1" fill="#6a6a6a"/><rect x="2" y="14" width="1" height="1" fill="#6a6a6a"/><rect x="0" y="16" width="1" height="1" fill="#6a6a6a"/></svg>
<svg style="position:absolute;left:858px;top:476px;" width="13" height="14" viewBox="0 0 13 14"><path d="M2 1v12" stroke="#ccc"/><path d="M4 3h6v3H4M4 8h8v3H4" stroke="#ccc" fill="none"/></svg>
<svg style="position:absolute;left:880px;top:476px;" width="13" height="14" viewBox="0 0 13 14"><path d="M11 1v12" stroke="#ccc"/><path d="M9 3H3v3h6M9 8H1v3h8" stroke="#ccc" fill="none"/></svg>
<div style="left:899px;top:474px;width:1px;height:18px;background:#555;"></div>
<svg style="position:absolute;left:909px;top:476px;" width="14" height="14" viewBox="0 0 14 14"><rect x="1" y="7" width="8" height="3" fill="none" stroke="#ccc"/><rect x="9" y="4" width="4" height="2" fill="none" stroke="#ccc"/></svg>
<svg style="position:absolute;left:930px;top:476px;" width="14" height="14" viewBox="0 0 14 14"><path d="M4 1v12M7 1v12" stroke="#ccc"/><rect x="0.5" y="6" width="3" height="4" fill="none" stroke="#ccc"/><rect x="7.5" y="3" width="4" height="4" fill="none" stroke="#ccc"/></svg>
<svg style="position:absolute;left:948px;top:486px;" width="9" height="6" viewBox="0 0 9 6"><path d="M0 0h9L4.5 5z" fill="#f0f0f0"/></svg>
<div style="left:0px;top:496px;width:1162px;height:22px;background:#0c0c0c;"></div>
<div style="left:2px;top:498px;width:56px;height:20px;background:#1f5d56;"></div>
<div class="t" style="left:8px;top:502px;font-size:12px;line-height:12px;color:#7cc4b4;font-weight:400;letter-spacing:0.092px;">Scene 0</div>
<div style="left:58px;top:498px;width:220px;height:20px;background:#2b2b2b;"></div>
<div class="t" style="left:64px;top:502px;font-size:12px;line-height:12px;color:#b8cce0;font-weight:400;">Chart 1</div>
<div style="left:0px;top:517px;width:1162px;height:172px;background:#262626;box-sizing:border-box;border:1px solid #2c7a72;"></div>
<div style="left:1px;top:518px;width:240px;height:31px;background:#262626;"></div>
<div style="left:1px;top:549px;width:240px;height:22px;background:#383838;"></div>
<div style="left:1px;top:570px;width:240px;height:1px;background:#4a4a4a;"></div>
<div style="left:1px;top:607px;width:240px;height:1px;background:#3a3a3a;"></div>
<div style="left:1px;top:627px;width:240px;height:1px;background:#3a3a3a;"></div>
<div style="left:1px;top:647px;width:240px;height:1px;background:#3a3a3a;"></div>
<div style="left:1px;top:667px;width:240px;height:1px;background:#3a3a3a;"></div>
<div style="left:1px;top:648px;width:240px;height:19px;background:#474747;"></div>
<div style="left:21px;top:571px;width:1px;height:117px;background:#3a3a3a;"></div>
<div style="left:41px;top:571px;width:1px;height:117px;background:#3a3a3a;"></div>
<div style="left:101px;top:571px;width:1px;height:117px;background:#3a3a3a;"></div>
<div style="left:121px;top:571px;width:1px;height:117px;background:#3a3a3a;"></div>
<div style="left:141px;top:571px;width:1px;height:117px;background:#3a3a3a;"></div>
<div style="left:21px;top:552px;width:1px;height:16px;background:#555;"></div>
<div style="left:41px;top:552px;width:1px;height:16px;background:#555;"></div>
<div style="left:101px;top:552px;width:1px;height:16px;background:#555;"></div>
<div style="left:121px;top:552px;width:1px;height:16px;background:#555;"></div>
<div style="left:141px;top:552px;width:1px;height:16px;background:#555;"></div>
<div style="left:241px;top:518px;width:1px;height:170px;background:#3a3a3a;"></div>
<div style="left:242px;top:518px;width:7px;height:170px;background:#1e1e1e;"></div>
<svg style="position:absolute;left:3px;top:553px;" width="18" height="14" viewBox="0 0 18 14"><path d="M1 7c3-4.5 13-4.5 16 0-3 4.5-13 4.5-16 0z" fill="none" stroke="#e8e8e8" stroke-width="1.4"/><circle cx="9" cy="7" r="2.6" fill="#e8e8e8"/></svg>
<svg style="position:absolute;left:25px;top:551px;" width="11" height="17" viewBox="0 0 11 17"><path d="M2.5 7V4.5a3 3 0 0 1 6 0V7" stroke="#cfcfcf" stroke-width="1.3" fill="none"/><rect x="1" y="7" width="9" height="9" fill="#cfcfcf"/></svg>
<svg style="position:absolute;left:42px;top:552px;" width="18" height="17" viewBox="0 0 18 17"><rect x="1" y="1" width="9" height="9" fill="#d8d8d8"/><circle cx="12" cy="11" r="5" fill="#d8d8d8" stroke="#383838"/></svg>
<div class="t" style="left:65px;top:554px;font-size:12px;line-height:12px;color:#8f9cab;font-weight:400;">COM...</div>
<svg style="position:absolute;left:103px;top:553px;" width="17" height="14" viewBox="0 0 17 14"><path d="M0 7h3l1-3 1.5 6 1.5-9 1.5 12 1.5-9 1.5 6 1-3h4" stroke="#d0d0d0" stroke-width="1.1" fill="none"/></svg>
<svg style="position:absolute;left:128px;top:553px;" width="8" height="14" viewBox="0 0 8 14"><rect x="0.5" y="0.5" width="7" height="13" fill="#cfcfcf"/><path d="M2 3h4M2 6h4M2 9h4" stroke="#555"/></svg>
<div class="t" style="left:146px;top:554px;font-size:12px;line-height:12px;color:#8f9cab;font-weight:400;letter-spacing:-1.394px;">LAYERS</div>
<svg style="position:absolute;left:3px;top:584px;" width="17" height="12" viewBox="0 0 17 12"><path d="M1 6c3-4.5 12-4.5 15 0-3 4.5-12 4.5-15 0z" fill="none" stroke="#9a9a9a" stroke-width="1.4"/><circle cx="8.5" cy="6" r="2.4" fill="#9a9a9a"/></svg>
<div class="t" style="left:44px;top:585px;font-size:12px;line-height:12px;color:#ececec;font-weight:400;">Blend</div>
<svg style="position:absolute;left:90px;top:587px;" width="10" height="6" viewBox="0 0 10 6"><path d="M1 1l4 4 4-4" stroke="#bdbdbd" stroke-width="1.2" fill="none"/></svg>
<svg style="position:absolute;left:124px;top:583px;" width="16" height="14" viewBox="0 0 16 14"><rect x="0.5" y="0.5" width="7" height="13" fill="#cfcfcf"/><path d="M2 3h4M2 6h4M2 9h4" stroke="#555"/><path d="M9 4h6l-3 4z" fill="#e0325a"/></svg>
<div class="t" style="left:164px;top:585px;font-size:12px;line-height:12px;color:#ececec;font-weight:400;">Video</div>
<svg style="position:absolute;left:3px;top:612px;" width="17" height="12" viewBox="0 0 17 12"><path d="M1 6c3-4.5 12-4.5 15 0-3 4.5-12 4.5-15 0z" fill="none" stroke="#9a9a9a" stroke-width="1.4"/><circle cx="8.5" cy="6" r="2.4" fill="#9a9a9a"/></svg>
<div class="t" style="left:44px;top:613px;font-size:12px;line-height:12px;color:#ececec;font-weight:400;">Blend</div>
<svg style="position:absolute;left:90px;top:615px;" width="10" height="6" viewBox="0 0 10 6"><path d="M1 1l4 4 4-4" stroke="#bdbdbd" stroke-width="1.2" fill="none"/></svg>
<svg style="position:absolute;left:124px;top:611px;" width="16" height="14" viewBox="0 0 16 14"><rect x="0.5" y="0.5" width="7" height="13" fill="#cfcfcf"/><path d="M2 3h4M2 6h4M2 9h4" stroke="#555"/><path d="M9 4h6l-3 4z" fill="#e0325a"/></svg>
<div class="t" style="left:164px;top:613px;font-size:12px;line-height:12px;color:#ececec;font-weight:400;">Image</div>
<svg style="position:absolute;left:3px;top:632px;" width="17" height="12" viewBox="0 0 17 12"><path d="M1 6c3-4.5 12-4.5 15 0-3 4.5-12 4.5-15 0z" fill="none" stroke="#9a9a9a" stroke-width="1.4"/><circle cx="8.5" cy="6" r="2.4" fill="#9a9a9a"/></svg>
<div class="t" style="left:44px;top:633px;font-size:12px;line-height:12px;color:#ececec;font-weight:400;">Blend</div>
<svg style="position:absolute;left:90px;top:635px;" width="10" height="6" viewBox="0 0 10 6"><path d="M1 1l4 4 4-4" stroke="#bdbdbd" stroke-width="1.2" fill="none"/></svg>
<svg style="position:absolute;left:124px;top:631px;" width="16" height="14" viewBox="0 0 16 14"><rect x="0.5" y="0.5" width="7" height="13" fill="#cfcfcf"/><path d="M2 3h4M2 6h4M2 9h4" stroke="#555"/><path d="M9 4h6l-3 4z" fill="#e0325a"/></svg>
<div class="t" style="left:164px;top:633px;font-size:12px;line-height:12px;color:#ececec;font-weight:400;">Text</div>
<svg style="position:absolute;left:3px;top:652px;" width="17" height="12" viewBox="0 0 17 12"><path d="M1 6c3-4.5 12-4.5 15 0-3 4.5-12 4.5-15 0z" fill="none" stroke="#9a9a9a" stroke-width="1.4"/><circle cx="8.5" cy="6" r="2.4" fill="#9a9a9a"/></svg>
<div class="t" style="left:44px;top:653px;font-size:12px;line-height:12px;color:#ececec;font-weight:400;">Blend</div>
<svg style="position:absolute;left:90px;top:655px;" width="10" height="6" viewBox="0 0 10 6"><path d="M1 1l4 4 4-4" stroke="#bdbdbd" stroke-width="1.2" fill="none"/></svg>
<svg style="position:absolute;left:124px;top:651px;" width="16" height="14" viewBox="0 0 16 14"><rect x="0.5" y="0.5" width="7" height="13" fill="#cfcfcf"/><path d="M2 3h4M2 6h4M2 9h4" stroke="#555"/><path d="M9 4h6l-3 4z" fill="#e0325a"/></svg>
<div class="t" style="left:164px;top:653px;font-size:12px;line-height:12px;color:#ececec;font-weight:400;">Chart</div>
<svg style="position:absolute;left:103px;top:582px;" width="17" height="14" viewBox="0 0 17 14"><path d="M0 7h3l1-3 1.5 6 1.5-9 1.5 12 1.5-9 1.5 6 1-3h4" stroke="#d0d0d0" stroke-width="1.1" fill="none"/></svg>
<svg style="position:absolute;left:143px;top:581px;" width="16" height="17" viewBox="0 0 16 17"><rect x="0.5" y="0.5" width="15" height="16" fill="#f4f4f4" stroke="#555"/><rect x="3.5" y="2.5" width="9" height="5.5" fill="#dfe8e8" stroke="#444" stroke-width="0.6"/><rect x="3.5" y="9" width="9" height="5.5" fill="#dfe8e8" stroke="#444" stroke-width="0.6"/><path d="M4 8l2.5-3 2 2 1.5-1 2 2M4 14.5l2.5-3 2 2 1.5-1 2 2" fill="#3aa8a0"/><rect x="1" y="1.5" width="1.5" height="1.5" fill="#333"/><rect x="13.5" y="1.5" width="1.5" height="1.5" fill="#333"/><rect x="1" y="4.5" width="1.5" height="1.5" fill="#333"/><rect x="13.5" y="4.5" width="1.5" height="1.5" fill="#333"/><rect x="1" y="7.5" width="1.5" height="1.5" fill="#333"/><rect x="13.5" y="7.5" width="1.5" height="1.5" fill="#333"/><rect x="1" y="10.5" width="1.5" height="1.5" fill="#333"/><rect x="13.5" y="10.5" width="1.5" height="1.5" fill="#333"/><rect x="1" y="13.5" width="1.5" height="1.5" fill="#333"/><rect x="13.5" y="13.5" width="1.5" height="1.5" fill="#333"/></svg>
<svg style="position:absolute;left:143px;top:610px;" width="16" height="16" viewBox="0 0 16 16"><rect x="0.75" y="0.75" width="14.5" height="14.5" fill="#3f8ec9" stroke="#e0325a" stroke-width="1.5"/><path d="M2 14l4-6 3 3 2-2 4 5z" fill="#f0f0f0"/><circle cx="5" cy="5" r="1.8" fill="#f6c542"/></svg>
<svg style="position:absolute;left:143px;top:629px;" width="16" height="18" viewBox="0 0 16 18"><path d="M1.5 4h10M6.5 4v13" stroke="#cfcfcf" stroke-width="1.6"/><path d="M13 1v5M10.5 3.5h5" stroke="#2bb59a" stroke-width="1.4"/></svg>
<svg style="position:absolute;left:143px;top:650px;" width="16" height="16" viewBox="0 0 16 16"><path d="M1 1v14h15" stroke="#111" fill="none"/><rect x="3" y="8" width="2.5" height="6" fill="#2bb59a"/><rect x="6.5" y="3" width="2.5" height="11" fill="#e0325a"/><rect x="10" y="6" width="2.5" height="8" fill="#2bb59a"/><rect x="13" y="10" width="2.5" height="4" fill="#3a7ac8"/></svg>
<div style="left:249px;top:518px;width:894px;height:11px;background:#333333;"></div>
<div style="left:249px;top:529px;width:888px;height:20px;background:#474747;"></div>
<div style="left:249px;top:549px;width:894px;height:19px;background:#222222;"></div>
<div style="left:249px;top:568px;width:894px;height:3px;background:#111111;"></div>
<div style="left:1137px;top:549px;width:6px;height:19px;background:#1a1a1a;"></div>
<div style="left:1136px;top:519px;width:7px;height:10px;background:#3a3a3a;box-sizing:border-box;border:1px solid #777;"></div>
<div style="left:242px;top:520px;width:7px;height:9px;background:#444;"></div>
<div style="left:242px;top:549px;width:14px;height:19px;background:#383838;box-sizing:border-box;border:1px solid #5a5a5a;"></div>
<svg style="position:absolute;left:249px;top:529px;" width="888" height="24" viewBox="0 0 888 24"><rect x="0" y="16" width="1" height="7" fill="#e0e0e0"/><rect x="10" y="18" width="1" height="4" fill="#d0d0d0"/><rect x="20" y="18" width="1" height="4" fill="#d0d0d0"/><rect x="29" y="16" width="1" height="7" fill="#e0e0e0"/><rect x="39" y="18" width="1" height="4" fill="#d0d0d0"/><rect x="48" y="18" width="1" height="4" fill="#d0d0d0"/><rect x="58" y="16" width="1" height="7" fill="#e0e0e0"/><rect x="67" y="18" width="1" height="4" fill="#d0d0d0"/><rect x="77" y="18" width="1" height="4" fill="#d0d0d0"/><rect x="87" y="16" width="1" height="7" fill="#e0e0e0"/><rect x="96" y="18" width="1" height="4" fill="#d0d0d0"/><rect x="106" y="18" width="1" height="4" fill="#d0d0d0"/><rect x="115" y="16" width="1" height="7" fill="#e0e0e0"/><rect x="125" y="18" width="1" height="4" fill="#d0d0d0"/><rect x="134" y="18" width="1" height="4" fill="#d0d0d0"/><rect x="144" y="16" width="1" height="7" fill="#e0e0e0"/><rect x="154" y="18" width="1" height="4" fill="#d0d0d0"/><rect x="163" y="18" width="1" height="4" fill="#d0d0d0"/><rect x="173" y="16" width="1" height="7" fill="#e0e0e0"/><rect x="182" y="18" width="1" height="4" fill="#d0d0d0"/><rect x="192" y="18" width="1" height="4" fill="#d0d0d0"/><rect x="201" y="16" width="1" height="7" fill="#e0e0e0"/><rect x="211" y="18" width="1" height="4" fill="#d0d0d0"/><rect x="221" y="18" width="1" height="4" fill="#d0d0d0"/><rect x="230" y="16" width="1" height="7" fill="#e0e0e0"/><rect x="240" y="18" width="1" height="4" fill="#d0d0d0"/><rect x="249" y="18" width="1" height="4" fill="#d0d0d0"/><rect x="259" y="16" width="1" height="7" fill="#e0e0e0"/><rect x="268" y="18" width="1" height="4" fill="#d0d0d0"/><rect x="278" y="18" width="1" height="4" fill="#d0d0d0"/><rect x="288" y="16" width="1" height="7" fill="#e0e0e0"/><rect x="297" y="18" width="1" height="4" fill="#d0d0d0"/><rect x="307" y="18" width="1" height="4" fill="#d0d0d0"/><rect x="316" y="16" width="1" height="7" fill="#e0e0e0"/><rect x="326" y="18" width="1" height="4" fill="#d0d0d0"/><rect x="335" y="18" width="1" height="4" fill="#d0d0d0"/><rect x="345" y="16" width="1" height="7" fill="#e0e0e0"/><rect x="354" y="18" width="1" height="4" fill="#d0d0d0"/><rect x="364" y="18" width="1" height="4" fill="#d0d0d0"/><rect x="374" y="16" width="1" height="7" fill="#e0e0e0"/><rect x="383" y="18" width="1" height="4" fill="#d0d0d0"/><rect x="393" y="18" width="1" height="4" fill="#d0d0d0"/><rect x="402" y="16" width="1" height="7" fill="#e0e0e0"/><rect x="412" y="18" width="1" height="4" fill="#d0d0d0"/><rect x="421" y="18" width="1" height="4" fill="#d0d0d0"/><rect x="431" y="16" width="1" height="7" fill="#e0e0e0"/><rect x="441" y="18" width="1" height="4" fill="#d0d0d0"/><rect x="450" y="18" width="1" height="4" fill="#d0d0d0"/><rect x="460" y="16" width="1" height="7" fill="#e0e0e0"/><rect x="469" y="18" width="1" height="4" fill="#d0d0d0"/><rect x="479" y="18" width="1" height="4" fill="#d0d0d0"/><rect x="488" y="16" width="1" height="7" fill="#e0e0e0"/><rect x="498" y="18" width="1" height="4" fill="#d0d0d0"/><rect x="508" y="18" width="1" height="4" fill="#d0d0d0"/><rect x="517" y="16" width="1" height="7" fill="#e0e0e0"/><rect x="527" y="18" width="1" height="4" fill="#d0d0d0"/><rect x="536" y="18" width="1" height="4" fill="#d0d0d0"/><rect x="546" y="16" width="1" height="7" fill="#e0e0e0"/><rect x="555" y="18" width="1" height="4" fill="#d0d0d0"/><rect x="565" y="18" width="1" height="4" fill="#d0d0d0"/><rect x="575" y="16" width="1" height="7" fill="#e0e0e0"/><rect x="584" y="18" width="1" height="4" fill="#d0d0d0"/><rect x="594" y="18" width="1" height="4" fill="#d0d0d0"/><rect x="603" y="16" width="1" height="7" fill="#e0e0e0"/><rect x="613" y="18" width="1" height="4" fill="#d0d0d0"/><rect x="622" y="18" width="1" height="4" fill="#d0d0d0"/><rect x="632" y="16" width="1" height="7" fill="#e0e0e0"/><rect x="641" y="18" width="1" height="4" fill="#d0d0d0"/><rect x="651" y="18" width="1" height="4" fill="#d0d0d0"/><rect x="661" y="16" width="1" height="7" fill="#e0e0e0"/><rect x="670" y="18" width="1" height="4" fill="#d0d0d0"/><rect x="680" y="18" width="1" height="4" fill="#d0d0d0"/><rect x="689" y="16" width="1" height="7" fill="#e0e0e0"/><rect x="699" y="18" width="1" height="4" fill="#d0d0d0"/><rect x="708" y="18" width="1" height="4" fill="#d0d0d0"/><rect x="718" y="16" width="1" height="7" fill="#e0e0e0"/><rect x="728" y="18" width="1" height="4" fill="#d0d0d0"/><rect x="737" y="18" width="1" height="4" fill="#d0d0d0"/><rect x="747" y="16" width="1" height="7" fill="#e0e0e0"/><rect x="756" y="18" width="1" height="4" fill="#d0d0d0"/><rect x="766" y="18" width="1" height="4" fill="#d0d0d0"/><rect x="775" y="16" width="1" height="7" fill="#e0e0e0"/><rect x="785" y="18" width="1" height="4" fill="#d0d0d0"/><rect x="795" y="18" width="1" height="4" fill="#d0d0d0"/><rect x="804" y="16" width="1" height="7" fill="#e0e0e0"/><rect x="814" y="18" width="1" height="4" fill="#d0d0d0"/><rect x="823" y="18" width="1" height="4" fill="#d0d0d0"/><rect x="833" y="16" width="1" height="7" fill="#e0e0e0"/><rect x="842" y="18" width="1" height="4" fill="#d0d0d0"/><rect x="852" y="18" width="1" height="4" fill="#d0d0d0"/><rect x="862" y="16" width="1" height="7" fill="#e0e0e0"/><rect x="871" y="18" width="1" height="4" fill="#d0d0d0"/><rect x="881" y="18" width="1" height="4" fill="#d0d0d0"/></svg>
<div style="left:249px;top:529px;width:888px;height:20px;overflow:hidden">
<div class="t" style="left:-24.400000000000006px;top:5px;font-size:11px;line-height:11px;color:#a3acb6;font-weight:400;letter-spacing:0.008px;">00:00.000</div>
<div class="t" style="left:33.0px;top:5px;font-size:11px;line-height:11px;color:#a3acb6;font-weight:400;letter-spacing:0.008px;">00:00.720</div>
<div class="t" style="left:90.39999999999998px;top:5px;font-size:11px;line-height:11px;color:#a3acb6;font-weight:400;letter-spacing:0.008px;">00:01.440</div>
<div class="t" style="left:147.8px;top:5px;font-size:11px;line-height:11px;color:#a3acb6;font-weight:400;letter-spacing:0.008px;">00:02.160</div>
<div class="t" style="left:205.2px;top:5px;font-size:11px;line-height:11px;color:#a3acb6;font-weight:400;letter-spacing:0.008px;">00:02.880</div>
<div class="t" style="left:262.6px;top:5px;font-size:11px;line-height:11px;color:#a3acb6;font-weight:400;letter-spacing:0.008px;">00:03.600</div>
<div class="t" style="left:320.0px;top:5px;font-size:11px;line-height:11px;color:#a3acb6;font-weight:400;letter-spacing:0.008px;">00:04.320</div>
<div class="t" style="left:377.4px;top:5px;font-size:11px;line-height:11px;color:#a3acb6;font-weight:400;letter-spacing:0.008px;">00:05.040</div>
<div class="t" style="left:434.79999999999995px;top:5px;font-size:11px;line-height:11px;color:#a3acb6;font-weight:400;letter-spacing:0.008px;">00:05.760</div>
<div class="t" style="left:492.20000000000005px;top:5px;font-size:11px;line-height:11px;color:#a3acb6;font-weight:400;letter-spacing:0.008px;">00:06.480</div>
<div class="t" style="left:549.6px;top:5px;font-size:11px;line-height:11px;color:#a3acb6;font-weight:400;letter-spacing:0.008px;">00:07.200</div>
<div class="t" style="left:607.0px;top:5px;font-size:11px;line-height:11px;color:#a3acb6;font-weight:400;letter-spacing:0.008px;">00:07.920</div>
<div class="t" style="left:664.4px;top:5px;font-size:11px;line-height:11px;color:#a3acb6;font-weight:400;letter-spacing:0.008px;">00:08.640</div>
<div class="t" style="left:721.8px;top:5px;font-size:11px;line-height:11px;color:#a3acb6;font-weight:400;letter-spacing:0.008px;">00:09.360</div>
<div class="t" style="left:779.1999999999998px;top:5px;font-size:11px;line-height:11px;color:#a3acb6;font-weight:400;letter-spacing:0.008px;">00:10.080</div>
<div class="t" style="left:836.5999999999999px;top:5px;font-size:11px;line-height:11px;color:#a3acb6;font-weight:400;letter-spacing:0.008px;">00:10.800</div>
</div>
<div style="left:249px;top:607px;width:894px;height:1px;background:#3a3a3a;"></div>
<div style="left:249px;top:627px;width:894px;height:1px;background:#3a3a3a;"></div>
<div style="left:249px;top:647px;width:894px;height:1px;background:#3a3a3a;"></div>
<div style="left:249px;top:667px;width:894px;height:1px;background:#3a3a3a;"></div>
<div style="left:250px;top:573px;width:799px;height:34px;background:#8aa9e6;"></div>
<div style="left:250px;top:607px;width:799px;height:2px;background:#2a2a2a;"></div>
<svg style="position:absolute;left:253px;top:575px;" width="40" height="29" viewBox="0 0 40 29"><defs><radialGradient id="th" cx="55%" cy="40%" r="75%"><stop offset="0" stop-color="#f4f4f4"/><stop offset="0.55" stop-color="#cdcdcd"/><stop offset="1" stop-color="#8a8a8a"/></radialGradient></defs><rect width="40" height="29" fill="url(#th)"/><rect x="8" y="12" width="20" height="5" fill="#f2f2f2"/><text x="9" y="16" font-size="4.2" font-family="Liberation Sans" font-weight="bold" fill="#333">Geek Dashboa</text><circle cx="31" cy="12" r="1.5" fill="#999"/><rect x="30" y="14" width="2" height="6" fill="#aaa"/></svg>
<div class="t" style="left:299px;top:585px;font-size:12px;line-height:12px;color:#16183a;font-weight:400;letter-spacing:-0.083px;">Welcome-to-Geek-Dashboard-Channel.mp4_ 1</div>
<div style="left:250px;top:609px;width:799px;height:18px;background:#b9a6e0;"></div>
<div style="left:250px;top:627px;width:799px;height:2px;background:#2a2a2a;"></div>
<svg style="position:absolute;left:253px;top:611px;" width="15" height="15" viewBox="0 0 15 15"><rect x="0.75" y="0.75" width="13.5" height="13.5" fill="#3f8ec9" stroke="#e0325a" stroke-width="1.5"/><path d="M2 13l4-5.5 3 3 2-2 3 4.5z" fill="#f0f0f0"/><circle cx="5" cy="5" r="1.7" fill="#f6c542"/></svg>
<div class="t" style="left:273px;top:613px;font-size:12px;line-height:12px;color:#16183a;font-weight:400;">unnamed_ 1</div>
<div style="left:250px;top:629px;width:799px;height:18px;background:#c1d0a4;"></div>
<div style="left:250px;top:647px;width:799px;height:1px;background:#2a2a2a;"></div>
<svg style="position:absolute;left:253px;top:629px;" width="16" height="18" viewBox="0 0 16 18"><path d="M1.5 5h10M6.5 5v12M4.5 17h4" stroke="#7a7a7a" stroke-width="1.5"/><path d="M13 1v5M10.5 3.5h5" stroke="#2bb59a" stroke-width="1.4"/></svg>
<div class="t" style="left:273px;top:633px;font-size:12px;line-height:12px;color:#16183a;font-weight:400;">Text 1</div>
<div style="left:249px;top:648px;width:800px;height:20px;background:#ffbf00;box-sizing:border-box;border:2px solid #1f8a80;border-left-width:1px;"></div>
<svg style="position:absolute;left:252px;top:650px;" width="16" height="16" viewBox="0 0 16 16"><path d="M1 1v14h15" stroke="#333" fill="none"/><rect x="3" y="8" width="2.5" height="6" fill="#2bb59a"/><rect x="6.5" y="3" width="2.5" height="11" fill="#e0325a"/><rect x="10" y="6" width="2.5" height="8" fill="#2bb59a"/><rect x="13" y="10" width="2.5" height="4" fill="#3a7ac8"/></svg>
<div class="t" style="left:273px;top:653px;font-size:12px;line-height:12px;color:#16183a;font-weight:400;">Chart 1</div>
<div style="left:245px;top:655px;width:5px;height:5px;background:#1f8a80;"></div>
<div style="left:1045px;top:655px;width:6px;height:6px;background:#1f5a55;box-sizing:border-box;border:1px solid #2a9a90;"></div>
<div style="left:249px;top:519px;width:1px;height:52px;background:#5cc2b4;"></div>
<div style="left:249px;top:571px;width:1px;height:117px;background:#e0283a;"></div>
<svg style="position:absolute;left:243px;top:532px;" width="13" height="17" viewBox="0 0 13 17"><path d="M1 1h11v10l-5.5 5L1 11z" fill="#3a9a8c" stroke="#5cc2b4"/></svg>
<div style="left:1143px;top:518px;width:18px;height:170px;background:#3a3a3a;"></div>
<div style="left:1144px;top:520px;width:16px;height:15px;background:#4a4a4a;"></div>
<svg style="position:absolute;left:1147px;top:523px;" width="10" height="8" viewBox="0 0 10 8"><path d="M1 7l4-5 4 5z" fill="#b8b8b8"/></svg>
<div style="left:1144px;top:563px;width:16px;height:109px;background:#595959;"></div>
<div style="left:1144px;top:672px;width:16px;height:15px;background:#4a4a4a;"></div>
<svg style="position:absolute;left:1147px;top:676px;" width="10" height="8" viewBox="0 0 10 8"><path d="M1 1h8L5 6z" fill="#b8b8b8"/></svg>
<div style="left:0px;top:689px;width:1162px;height:19px;background:#383838;"></div>
<div style="left:0px;top:690px;width:18px;height:17px;background:#333;box-sizing:border-box;border:1px solid #4a4a4a;"></div>
<svg style="position:absolute;left:4px;top:693px;" width="8" height="11" viewBox="0 0 8 11"><path d="M7 0.5L1 5.5 7 10.5z" fill="#4e4e4e"/></svg>
<div style="left:1143px;top:690px;width:18px;height:17px;background:#333;box-sizing:border-box;border:1px solid #4a4a4a;"></div>
<svg style="position:absolute;left:1149px;top:693px;" width="8" height="11" viewBox="0 0 8 11"><path d="M1 0.5L7 5.5 1 10.5z" fill="#4e4e4e"/></svg>
<div style="left:0px;top:708px;width:1366px;height:20px;background:#2d2d2d;"></div>
<div class="t" style="left:4px;top:713px;font-size:12px;line-height:12px;color:#ececec;font-weight:400;letter-spacing:0.010px;">Create chart object and add it to editor</div>
<div class="t" style="left:648px;top:713px;font-size:12px;line-height:12px;color:#ececec;font-weight:400;letter-spacing:-0.004px;">Position:</div>
<div class="t" style="left:704px;top:713px;font-size:12px;line-height:12px;color:#ececec;font-weight:400;letter-spacing:-0.643px;">00:00:00.000</div>
<div class="t" style="left:776px;top:713px;font-size:12px;line-height:12px;color:#ececec;font-weight:400;letter-spacing:-0.158px;">Start selection:</div>
<div class="t" style="left:864px;top:713px;font-size:12px;line-height:12px;color:#ececec;font-weight:400;letter-spacing:-0.689px;">00:00:00.000</div>
<div class="t" style="left:937px;top:713px;font-size:12px;line-height:12px;color:#ececec;font-weight:400;letter-spacing:-0.222px;">End selection:</div>
<div class="t" style="left:1020px;top:713px;font-size:12px;line-height:12px;color:#ececec;font-weight:400;letter-spacing:-0.643px;">00:00:00.000</div>
<div class="t" style="left:1098px;top:713px;font-size:12px;line-height:12px;color:#ececec;font-weight:400;letter-spacing:-0.102px;">Zoom To Screen</div>
<div class="t" style="left:1203px;top:713px;font-size:12px;line-height:12px;color:#ececec;font-weight:400;letter-spacing:-0.516px;">35%</div>
<div style="left:1243px;top:718px;width:6px;height:1px;background:#777;"></div>
<div style="left:1252px;top:718px;width:99px;height:1px;background:#777;"></div>
<div style="left:1268px;top:711px;width:2px;height:14px;background:#888;"></div>
<svg style="position:absolute;left:1353px;top:712px;" width="10" height="12" viewBox="0 0 10 12"><path d="M5 1v10M0.5 6h9" stroke="#777" stroke-width="1.4"/></svg>
<div style="left:0px;top:728px;width:1366px;height:40px;background:#0d0d0d;"></div>
<svg style="position:absolute;left:16px;top:740px;" width="18" height="18" viewBox="0 0 18 18"><path d="M0 2.5L7.3 1.5v7H0zM8.3 1.4L18 0v8.5H8.3zM0 9.5h7.3v7L0 15.5zM8.3 9.5H18V18l-9.7-1.4z" fill="#fafafa"/></svg>
<div style="left:48px;top:728px;width:344px;height:40px;background:#f0f0f0;"></div>
<svg style="position:absolute;left:56px;top:737px;" width="24" height="24" viewBox="0 0 24 24"><circle cx="12" cy="12" r="9.5" fill="none" stroke="#111" stroke-width="2.6"/></svg>
<div class="t" style="left:89px;top:741px;font-size:15px;line-height:15px;color:#2a2a2a;font-weight:400;letter-spacing:-0.282px;">Type here to search</div>
<svg style="position:absolute;left:363px;top:738px;" width="14" height="20" viewBox="0 0 14 20"><rect x="4" y="1" width="6" height="11" rx="3" fill="none" stroke="#333" stroke-width="1.5"/><path d="M1.5 9a5.5 5.5 0 0 0 11 0M7 14.5V18M4 18h6" stroke="#333" stroke-width="1.5" fill="none"/></svg>
<svg style="position:absolute;left:407px;top:736px;" width="24" height="24" viewBox="0 0 24 24"><circle cx="12" cy="12" r="11" fill="#db4437"/><path d="M12 12L2.5 6.5A11 11 0 0 0 7 21.5z" fill="#0f9d58"/><path d="M12 12l-5 9.5A11 11 0 0 0 23 12z" fill="#ffcd40"/><path d="M12 12L23 12A11 11 0 0 0 21.5 6.5H12z" fill="#ffcd40"/><circle cx="12" cy="12" r="5" fill="#fff"/><circle cx="12" cy="12" r="3.8" fill="#4285f4"/></svg>
<div style="left:399px;top:766px;width:40px;height:2px;background:#76b9ed;"></div>
<svg style="position:absolute;left:456px;top:736px;" width="25" height="25" viewBox="0 0 25 25"><circle cx="12.5" cy="12.5" r="12" fill="#6dba3a"/><circle cx="12.5" cy="12.5" r="10" fill="#80c84a"/><path d="M7 6v8a5.5 5.5 0 0 0 11 0V6" stroke="#f4f4f4" stroke-width="3" fill="none"/><path d="M9 17v5" stroke="#f4f4f4" stroke-width="3"/></svg>
<svg style="position:absolute;left:505px;top:737px;" width="24" height="22" viewBox="0 0 24 22"><path d="M1 3h8l2 2h12v15H1z" fill="#e8b84a"/><rect x="1" y="6" width="22" height="14" fill="#f8d775"/><path d="M7 20v-7h10v7h-3v-4h-4v4z" fill="#2a8ad8"/></svg>
<svg style="position:absolute;left:553px;top:736px;" width="26" height="24" viewBox="0 0 26 24"><ellipse cx="12" cy="9" rx="10" ry="7.5" fill="#f0f0f0" stroke="#d03030" stroke-width="2" transform="rotate(-20 12 9)"/><path d="M3 15q9 4 18-2" stroke="#888" stroke-width="2" fill="none"/><path d="M14 4l2 12M18 5l-5 11" stroke="#777" stroke-width="1.2"/><circle cx="12" cy="19" r="3" fill="none" stroke="#2a7ad0" stroke-width="1.8"/><circle cx="19" cy="18" r="3" fill="none" stroke="#2a7ad0" stroke-width="1.8"/></svg>
<div style="left:591px;top:728px;width:48px;height:40px;background:#3c3c3c;"></div>
<div style="left:591px;top:766px;width:48px;height:2px;background:#76b9ed;"></div>
<svg style="position:absolute;left:602px;top:736px;" width="26" height="24" viewBox="0 0 26 24"><rect x="0.5" y="0.5" width="25" height="23" fill="#0e5a5a" stroke="#3cc0c0"/><path d="M4 3l15 9-15 9z" fill="#3cc8c0"/><rect x="19" y="3" width="4" height="7" fill="#3cc8c0"/><rect x="19" y="14" width="4" height="7" fill="#3cc8c0"/></svg>
<svg style="position:absolute;left:1145px;top:739px;" width="17" height="17" viewBox="0 0 17 17"><circle cx="11.5" cy="4" r="2.8" fill="none" stroke="#eee" stroke-width="1.2"/><path d="M7 14a5 5 0 0 1 9-2" stroke="#eee" stroke-width="1.2" fill="none"/><circle cx="5.5" cy="8" r="2.8" fill="none" stroke="#eee" stroke-width="1.2"/><path d="M1 16.5a5 5 0 0 1 9 0" stroke="#eee" stroke-width="1.2" fill="none"/></svg>
<svg style="position:absolute;left:1182px;top:744px;" width="14" height="9" viewBox="0 0 14 9"><path d="M1 7.5l6-6 6 6" stroke="#eee" stroke-width="1.3" fill="none"/></svg>
<svg style="position:absolute;left:1204px;top:741px;" width="18" height="15" viewBox="0 0 18 15"><rect x="4.5" y="1.5" width="13" height="9" fill="none" stroke="#eee" stroke-width="1.2"/><path d="M11 10.5v3M7 13.5h8" stroke="#eee" stroke-width="1.2"/><rect x="0.5" y="1.5" width="4" height="4" fill="#0d0d0d" stroke="#eee"/></svg>
<svg style="position:absolute;left:1228px;top:740px;" width="18" height="17" viewBox="0 0 18 17"><path d="M1 6h3l4-4v13l-4-4H1z" fill="none" stroke="#eee" stroke-width="1.1"/><path d="M10.5 5.5a3.5 3.5 0 0 1 0 6M13 3.5a6.5 6.5 0 0 1 0 10M15.5 1.5a9 9 0 0 1 0 14" stroke="#eee" stroke-width="1.1" fill="none"/></svg>
<div class="t" style="left:1258px;top:733px;font-size:12px;line-height:12px;color:#f0f0f0;font-weight:400;letter-spacing:-0.482px;">10:43 PM</div>
<div class="t" style="left:1256px;top:751px;font-size:12px;line-height:12px;color:#f0f0f0;font-weight:400;letter-spacing:-0.174px;">1/28/2019</div>
<svg style="position:absolute;left:1324px;top:739px;" width="19" height="18" viewBox="0 0 19 18"><path d="M1.5 1.5h16v11h-6l-2 3-2-3h-6z" fill="none" stroke="#eee" stroke-width="1.2"/></svg>
<div style="left:1361px;top:728px;width:1px;height:40px;background:#5a5a5a;"></div>
<div style="left:80px;top:134px;width:204px;height:392px;background:rgba(0,0,0,0.35);filter:blur(2px)"></div>
<div style="left:74px;top:129px;width:206px;height:393px;background:#333333;box-sizing:border-box;border:1px solid #5a5a5a;"></div>
<div style="left:77px;top:364px;width:200px;height:20px;background:#4a4a4a;"></div>
<div class="t" style="left:109px;top:136px;font-size:12px;line-height:12px;color:#ececec;font-weight:400;letter-spacing:-0.25px">Run sprite wizard...</div>
<div class="t" style="right:1106px;top:136px;font-size:12px;line-height:12px;color:#ececec;font-weight:400;letter-spacing:0px">Ctrl+W</div>
<div style="left:108px;top:155px;width:171px;height:1px;background:#555555;"></div>
<div class="t" style="left:109px;top:161px;font-size:12px;line-height:12px;color:#ececec;font-weight:400;letter-spacing:-0.25px">Sprite</div>
<div class="t" style="right:1106px;top:161px;font-size:12px;line-height:12px;color:#ececec;font-weight:400;letter-spacing:0px">Shift+P</div>
<div class="t" style="left:109px;top:183px;font-size:12px;line-height:12px;color:#ececec;font-weight:400;letter-spacing:-0.25px">Duplicate</div>
<div class="t" style="right:1106px;top:183px;font-size:12px;line-height:12px;color:#ececec;font-weight:400;letter-spacing:0px">Shift+D</div>
<div style="left:108px;top:202px;width:171px;height:1px;background:#555555;"></div>
<div class="t" style="left:109px;top:208px;font-size:12px;line-height:12px;color:#ececec;font-weight:400;letter-spacing:-0.25px">Line</div>
<div class="t" style="right:1106px;top:208px;font-size:12px;line-height:12px;color:#ececec;font-weight:400;letter-spacing:0px">Shift+L</div>
<div class="t" style="left:109px;top:230px;font-size:12px;line-height:12px;color:#ececec;font-weight:400;letter-spacing:-0.25px">Rectangle</div>
<div class="t" style="right:1106px;top:230px;font-size:12px;line-height:12px;color:#ececec;font-weight:400;letter-spacing:0px">Shift+R</div>
<div class="t" style="left:109px;top:252px;font-size:12px;line-height:12px;color:#ececec;font-weight:400;letter-spacing:-0.25px">Ellipse</div>
<div class="t" style="right:1106px;top:252px;font-size:12px;line-height:12px;color:#ececec;font-weight:400;letter-spacing:0px">Shift+E</div>
<div class="t" style="left:109px;top:274px;font-size:12px;line-height:12px;color:#ececec;font-weight:400;letter-spacing:-0.25px">Free shape</div>
<div class="t" style="right:1106px;top:274px;font-size:12px;line-height:12px;color:#ececec;font-weight:400;letter-spacing:0px">Shift+H</div>
<div style="left:108px;top:293px;width:171px;height:1px;background:#555555;"></div>
<div class="t" style="left:109px;top:299px;font-size:12px;line-height:12px;color:#ececec;font-weight:400;letter-spacing:-0.25px">Text</div>
<svg style="position:absolute;left:264px;top:299px;" width="7" height="10" viewBox="0 0 7 10"><path d="M1 0.5l5.5 4.5L1 9.5z" fill="#e0e0e0"/></svg>
<div class="t" style="left:109px;top:321px;font-size:12px;line-height:12px;color:#ececec;font-weight:400;letter-spacing:-0.25px">Subtitles</div>
<div class="t" style="right:1106px;top:321px;font-size:12px;line-height:12px;color:#ececec;font-weight:400;letter-spacing:0px">Shift+S</div>
<div class="t" style="left:109px;top:343px;font-size:12px;line-height:12px;color:#ececec;font-weight:400;letter-spacing:-0.25px">Tooltip</div>
<div class="t" style="right:1106px;top:343px;font-size:12px;line-height:12px;color:#ececec;font-weight:400;letter-spacing:0px">Shift+U</div>
<div style="left:108px;top:362px;width:171px;height:1px;background:#555555;"></div>
<div class="t" style="left:109px;top:368px;font-size:12px;line-height:12px;color:#ececec;font-weight:400;letter-spacing:-0.25px">Chart</div>
<svg style="position:absolute;left:264px;top:368px;" width="7" height="10" viewBox="0 0 7 10"><path d="M1 0.5l5.5 4.5L1 9.5z" fill="#e0e0e0"/></svg>
<div class="t" style="left:109px;top:390px;font-size:12px;line-height:12px;color:#ececec;font-weight:400;letter-spacing:-0.25px">Animation</div>
<div class="t" style="right:1106px;top:390px;font-size:12px;line-height:12px;color:#ececec;font-weight:400;letter-spacing:0px">Shift+N</div>
<div class="t" style="left:109px;top:412px;font-size:12px;line-height:12px;color:#ececec;font-weight:400;letter-spacing:-0.25px">Image</div>
<div class="t" style="right:1106px;top:412px;font-size:12px;line-height:12px;color:#ececec;font-weight:400;letter-spacing:0px">Shift+I</div>
<div class="t" style="left:109px;top:434px;font-size:12px;line-height:12px;color:#ececec;font-weight:400;letter-spacing:-0.25px">Audio</div>
<div class="t" style="right:1106px;top:434px;font-size:12px;line-height:12px;color:#ececec;font-weight:400;letter-spacing:0px">Shift+A</div>
<div class="t" style="left:109px;top:456px;font-size:12px;line-height:12px;color:#ececec;font-weight:400;letter-spacing:-0.25px">Video</div>
<div class="t" style="right:1106px;top:456px;font-size:12px;line-height:12px;color:#ececec;font-weight:400;letter-spacing:0px">Shift+V</div>
<div style="left:108px;top:475px;width:171px;height:1px;background:#555555;"></div>
<div class="t" style="left:109px;top:481px;font-size:12px;line-height:12px;color:#ececec;font-weight:400;letter-spacing:-0.25px">Audio visualization</div>
<svg style="position:absolute;left:264px;top:481px;" width="7" height="10" viewBox="0 0 7 10"><path d="M1 0.5l5.5 4.5L1 9.5z" fill="#e0e0e0"/></svg>
<div class="t" style="left:109px;top:503px;font-size:12px;line-height:12px;color:#6f6f6f;font-weight:400;letter-spacing:-0.25px">Movement</div>
<div class="t" style="right:1106px;top:503px;font-size:12px;line-height:12px;color:#6f6f6f;font-weight:400;letter-spacing:0px">Shift+M</div>
<svg style="position:absolute;left:79px;top:133px;" width="18" height="16" viewBox="0 0 18 16"><path d="M3 14L12 5" stroke="#f0f0f0" stroke-width="2" stroke-linecap="round"/><path d="M12 2.5l2 2M13.5 1l2 2" stroke="#ccc" stroke-width="1.2"/></svg>
<svg style="position:absolute;left:79px;top:158px;" width="18" height="16" viewBox="0 0 18 16"><rect x="2" y="2" width="10" height="7" fill="#b8b8b8"/><rect x="5.5" y="6.5" width="10" height="7" fill="none" stroke="#4cc49c" stroke-width="1.2"/></svg>
<svg style="position:absolute;left:79px;top:180px;" width="18" height="16" viewBox="0 0 18 16"><rect x="5" y="6" width="11" height="8" fill="#8a8a8a"/><rect x="2" y="2" width="10" height="7" fill="#b8b8b8"/></svg>
<svg style="position:absolute;left:79px;top:205px;" width="18" height="16" viewBox="0 0 18 16"><path d="M3 14L15 3" stroke="#9a9a9a" stroke-width="1.4"/></svg>
<svg style="position:absolute;left:79px;top:227px;" width="18" height="16" viewBox="0 0 18 16"><rect x="2" y="3" width="15" height="11" fill="#9a9a9a"/></svg>
<svg style="position:absolute;left:79px;top:249px;" width="18" height="16" viewBox="0 0 18 16"><ellipse cx="9.5" cy="8" rx="7.5" ry="5" fill="#9a9a9a"/></svg>
<svg style="position:absolute;left:79px;top:271px;" width="18" height="16" viewBox="0 0 18 16"><path d="M2 11l4-3-2-4 5 1 3-3 2 4 3 2-4 2 1 4-5-2-4 3z" fill="#8a8a8a"/></svg>
<svg style="position:absolute;left:79px;top:296px;" width="18" height="16" viewBox="0 0 18 16"><path d="M3 2h13v4h-1.2l-.6-2.5H10.8v10.5l2 .5v1H6.2v-1l2-.5V3.5H4.8L4.2 6H3z" fill="#b0b0b0"/></svg>
<svg style="position:absolute;left:79px;top:318px;" width="18" height="16" viewBox="0 0 18 16"><text x="9" y="12.5" text-anchor="middle" font-size="10" font-weight="bold" font-family="Liberation Mono" fill="#9a9a9a" letter-spacing="-1">SUB</text></svg>
<svg style="position:absolute;left:79px;top:340px;" width="18" height="16" viewBox="0 0 18 16"><ellipse cx="9" cy="7" rx="7" ry="5" fill="#a0a0a0"/><path d="M4 10l-1.5 4 5-3z" fill="#a0a0a0"/></svg>
<svg style="position:absolute;left:79px;top:365px;" width="18" height="16" viewBox="0 0 18 16"><rect x="2" y="8" width="1.3" height="6" fill="#8a8a8a"/><rect x="5" y="5" width="1.3" height="9" fill="#8a8a8a"/><rect x="8" y="3" width="1.3" height="11" fill="#8a8a8a"/><rect x="11" y="7" width="1.3" height="7" fill="#8a8a8a"/><rect x="14" y="9" width="1.3" height="5" fill="#8a8a8a"/><rect x="1" y="14" width="16" height="1" fill="#8a8a8a"/></svg>
<svg style="position:absolute;left:79px;top:387px;" width="18" height="16" viewBox="0 0 18 16"><circle cx="11" cy="3" r="2" fill="#f0f0f0"/><path d="M10 5.5l-3 4 3 1-1 4M10 6l3 3h2M8 8l-3 1M7 11l-3 3" stroke="#f0f0f0" stroke-width="1.6" fill="none"/></svg>
<svg style="position:absolute;left:80px;top:409px;" width="17" height="17" viewBox="0 0 17 17"><rect x="0" y="0" width="17" height="17" fill="#55c39a"/><path d="M0 17V13l5-5 5 4 3-2 4 4v3z" fill="#ffffff"/><circle cx="12.5" cy="4.5" r="2" fill="#fff"/></svg>
<svg style="position:absolute;left:80px;top:431px;" width="17" height="17" viewBox="0 0 17 17"><rect x="0" y="0" width="17" height="17" fill="#55c39a"/><path d="M6.5 4v7.5M6.5 4l6-1.5v7.5" stroke="#fff" stroke-width="1.5" fill="none"/><circle cx="5" cy="12" r="2" fill="#fff"/><circle cx="11" cy="11" r="2" fill="#fff"/></svg>
<svg style="position:absolute;left:80px;top:453px;" width="17" height="17" viewBox="0 0 17 17"><rect x="0" y="0" width="17" height="17" fill="#55c39a"/><path d="M3 3l11 5.5L3 14z" fill="#fff"/></svg>
<svg style="position:absolute;left:79px;top:478px;" width="18" height="16" viewBox="0 0 18 16"><rect x="1" y="15.0" width="1.8" height="1.8" fill="#9a9a9a"/><rect x="1" y="12.5" width="1.8" height="1.8" fill="#9a9a9a"/><rect x="4" y="15.0" width="1.8" height="1.8" fill="#9a9a9a"/><rect x="4" y="12.5" width="1.8" height="1.8" fill="#9a9a9a"/><rect x="4" y="10.0" width="1.8" height="1.8" fill="#9a9a9a"/><rect x="4" y="7.5" width="1.8" height="1.8" fill="#9a9a9a"/><rect x="7" y="15.0" width="1.8" height="1.8" fill="#9a9a9a"/><rect x="7" y="12.5" width="1.8" height="1.8" fill="#9a9a9a"/><rect x="7" y="10.0" width="1.8" height="1.8" fill="#9a9a9a"/><rect x="7" y="7.5" width="1.8" height="1.8" fill="#9a9a9a"/><rect x="7" y="5.0" width="1.8" height="1.8" fill="#9a9a9a"/><rect x="7" y="2.5" width="1.8" height="1.8" fill="#9a9a9a"/><rect x="10" y="15.0" width="1.8" height="1.8" fill="#9a9a9a"/><rect x="10" y="12.5" width="1.8" height="1.8" fill="#9a9a9a"/><rect x="10" y="10.0" width="1.8" height="1.8" fill="#9a9a9a"/><rect x="10" y="7.5" width="1.8" height="1.8" fill="#9a9a9a"/><rect x="10" y="5.0" width="1.8" height="1.8" fill="#9a9a9a"/><rect x="13" y="15.0" width="1.8" height="1.8" fill="#9a9a9a"/><rect x="13" y="12.5" width="1.8" height="1.8" fill="#9a9a9a"/><rect x="13" y="10.0" width="1.8" height="1.8" fill="#9a9a9a"/></svg>
<svg style="position:absolute;left:79px;top:500px;" width="18" height="18" viewBox="0 0 18 18"><path d="M9 1v15M1.5 8.5h15" stroke="#bdbdbd" stroke-width="1.6"/><path d="M9 0l3 3H6zM9 17l3-3H6zM0 8.5l3-3v6zM18 8.5l-3-3v6z" fill="#bdbdbd"/></svg>
<div style="left:285px;top:369px;width:134px;height:66px;background:rgba(0,0,0,0.35);filter:blur(2px)"></div>
<div style="left:279px;top:364px;width:138px;height:69px;background:#333333;box-sizing:border-box;border:1px solid #5a5a5a;"></div>
<div style="left:282px;top:366px;width:132px;height:20px;background:#4a4a4a;"></div>
<svg style="position:absolute;left:285px;top:368px;" width="18" height="16" viewBox="0 0 18 16"><rect x="3.0" y="11" width="1.4" height="3" fill="#8e8e8e"/><rect x="6.5" y="8" width="1.4" height="6" fill="#8e8e8e"/><rect x="10.0" y="5" width="1.4" height="9" fill="#8e8e8e"/><rect x="13.5" y="2" width="1.4" height="12" fill="#8e8e8e"/></svg>
<div class="t" style="left:315px;top:370px;font-size:12px;line-height:12px;color:#ececec;font-weight:400;">Chart</div>
<div class="t" style="left:357px;top:370px;font-size:12px;line-height:12px;color:#ececec;font-weight:400;">Shift+C</div>
<svg style="position:absolute;left:285px;top:391px;" width="16" height="13" viewBox="0 0 16 13"><rect x="1" y="1" width="13" height="4.5" fill="#cfcfcf"/><rect x="1" y="8" width="5" height="4" fill="#cfcfcf"/><rect x="9" y="8" width="5" height="4" fill="#cfcfcf"/><path d="M7.5 5.5v3M5 9.5h5" stroke="#cfcfcf"/></svg>
<div class="t" style="left:315px;top:392px;font-size:12px;line-height:12px;color:#6f6f6f;font-weight:400;">Diagram</div>
<svg style="position:absolute;left:285px;top:413px;" width="16" height="14" viewBox="0 0 16 14"><path d="M2 2l2 2M6 6l2 2M10 9l2 2M13 11l2 2M4 9l2-2M9 5l1-1" stroke="#cfcfcf" stroke-width="1.6"/></svg>
<div class="t" style="left:315px;top:414px;font-size:12px;line-height:12px;color:#6f6f6f;font-weight:400;">Series</div>
</body></html>
